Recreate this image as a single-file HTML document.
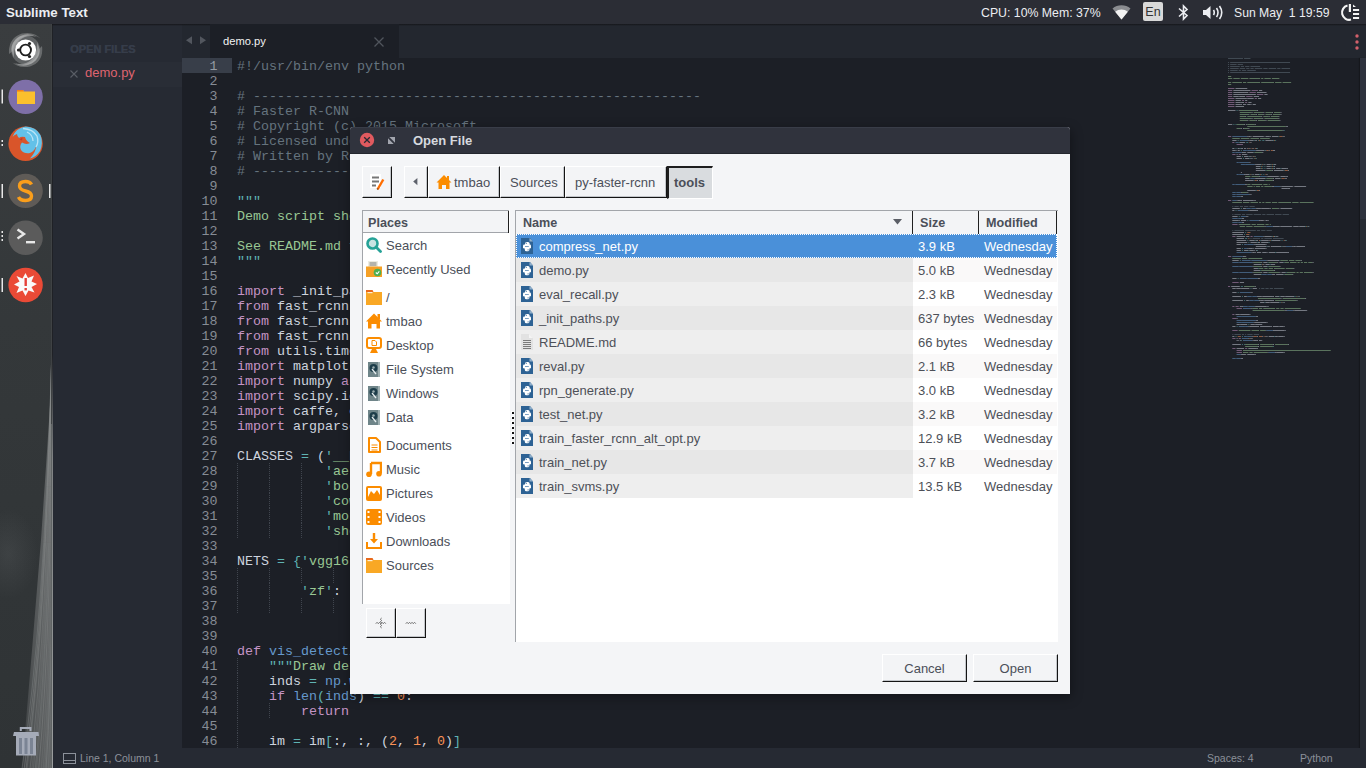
<!DOCTYPE html>
<html><head><meta charset="utf-8">
<style>
*{margin:0;padding:0;box-sizing:border-box}
html,body{width:1366px;height:768px;overflow:hidden;background:#1e2127;font-family:"Liberation Sans",sans-serif}
.abs{position:absolute}
#panel{position:absolute;left:0;top:0;width:1366px;height:24px;background:#2b2d35;color:#eceef2;font-size:12.5px}
#launcher{position:absolute;left:0;top:24px;width:52px;height:744px;background:linear-gradient(180deg,#3a3d3f 0%,#34383a 40%,#2f3335 100%)}
#sidebar{position:absolute;left:53px;top:24px;width:129px;height:724px;background:#262a33}
#tabbar{position:absolute;left:182px;top:24px;width:1184px;height:34px;background:#23272f}
#tab{position:absolute;left:210px;top:24px;width:189px;height:34px;background:#1c1f26}
#editor{position:absolute;left:182px;top:58px;width:1184px;height:690px;background:#1c1f26}
#status{position:absolute;left:53px;top:748px;width:1313px;height:20px;background:#262a33;color:#8c919a;font-size:10.5px}
.mono{font-family:"Liberation Mono",monospace;font-size:13.33px}
#code{position:absolute;left:237px;top:59px;color:#cdd3de;white-space:pre}
#gutter{position:absolute;left:182px;top:59px;width:35.5px;color:#868c95;text-align:right}
.ln,.gn{height:15px;line-height:15px}
.gn.cur{color:#959ba4}
.com{color:#65737e}.str{color:#99c794}.kw{color:#c594c5}.num{color:#f99157}.op{color:#5fb3b3}.fn{color:#6699cc}
.g{position:absolute;width:1px;height:15px;background-image:linear-gradient(#40454e 50%,transparent 50%);background-size:1px 2px}
#dialog{position:absolute;left:350px;top:127px;width:720px;height:567px;background:#f4f5f7;box-shadow:1px 3px 12px rgba(0,0,0,.38);border-radius:3px 3px 0 0}
#dtitle{position:absolute;left:0;top:0;width:720px;height:27px;background:#30333d;border-radius:3px 3px 0 0;border-top:1px solid #393d48;border-bottom:1px solid #24272e}
.ui{font-family:"Liberation Sans",sans-serif;color:#4c4c4c;font-size:13px}
.btn{position:absolute;background:#f3f4f6;border-right:1px solid #141414;border-bottom:1px solid #141414;border-left:1px solid #fff;border-top:1px solid #fff;box-shadow:inset -1px -1px 0 #c3c6ca}
.place{position:absolute;left:4px;height:24px;line-height:24px;font-size:13px;color:#4c4c4c}
.place svg{position:absolute;left:0;top:4px}
.place span{position:absolute;left:20px;top:0;white-space:nowrap}
.row{position:absolute;left:0;width:541px;height:24px;font-size:13px;color:#4c4c4c;line-height:24px}
.row .c1{position:absolute;left:0;width:397px;height:24px}
.row .c2{position:absolute;left:397px;width:66px;height:24px}
.row .c3{position:absolute;left:463px;width:78px;height:24px}
.row .t{position:absolute;white-space:nowrap}
.dtxt{color:#4b4f59;font-size:13px;white-space:nowrap;margin-top:1px}
.ptxt{color:#4b4f59;font-size:13px;white-space:nowrap;margin-top:1px}
</style></head><body>

<div id="panel">
  <div class="abs" style="left:6px;top:5px;font-weight:bold;font-size:13.3px;">Sublime Text</div>
  <div class="abs" style="left:981px;top:6px;font-size:12.3px;">CPU: 10% Mem: 37%</div>
  <svg class="abs" style="left:1112px;top:4px" width="19" height="16" viewBox="0 0 19 16"><path d="M9.5 15.5 L0.5 4.5 A14 14 0 0 1 18.5 4.5 Z" fill="#8a8c90"/><path d="M9.5 15.5 L3.2 7.8 A9.5 9.5 0 0 1 15.8 7.8 Z" fill="#f2f2f2"/></svg>
  <div class="abs" style="left:1143px;top:2px;width:20px;height:19px;background:#d9d9d9;border-radius:2px;color:#333;font-size:12.5px;text-align:center;line-height:20px">En</div>
  <svg class="abs" style="left:1177px;top:4px" width="13" height="17" viewBox="0 0 13 17"><path d="M2 4.5 L10 11.5 L6.5 15 L6.5 2 L10 5.5 L2 12.5" fill="none" stroke="#eceef2" stroke-width="1.6"/></svg>
  <svg class="abs" style="left:1202px;top:5px" width="22" height="15" viewBox="0 0 22 15"><path d="M1 5 H4 L8.5 1 V14 L4 10 H1 Z" fill="#eceef2"/><path d="M11.5 5 Q13 7.5 11.5 10 M14.5 3 Q17.5 7.5 14.5 12 M17.5 1 Q22 7.5 17.5 14" fill="none" stroke="#eceef2" stroke-width="1.6"/></svg>
  <div class="abs" style="left:1234px;top:6px;font-size:12.2px;">Sun May&nbsp; 1 19:59</div>
  <svg class="abs" style="left:1340px;top:3px" width="26" height="19" viewBox="1340 3 26 19"><path d="M1347.5 5.6 A7.2 7.2 0 0 0 1351 19.6" fill="none" stroke="#f4f4f4" stroke-width="2.1"/><rect x="1348.8" y="4" width="2.2" height="8" fill="#f4f4f4"/><path d="M1353 4.6 L1356 7 H1353 Z" fill="#f4f4f4"/><rect x="1353" y="9" width="6.1" height="2" fill="#f4f4f4"/><rect x="1353" y="13" width="6.1" height="2" fill="#f4f4f4"/><rect x="1353" y="17" width="6.1" height="2" fill="#f4f4f4"/></svg>
</div>

<div id="launcher">
  <svg class="abs" style="left:0;top:0" width="53" height="744" viewBox="0 0 53 744">
    <defs>
      <linearGradient id="streak" x1="0" y1="0" x2="1" y2="0">
        <stop offset="0" stop-color="#55585a" stop-opacity=".35"/>
        <stop offset="0.35" stop-color="#5c5f60" stop-opacity=".75"/>
        <stop offset="1" stop-color="#6a6d6e" stop-opacity=".9"/>
      </linearGradient>
      <linearGradient id="edgefade" x1="0" y1="330" x2="0" y2="744" gradientUnits="userSpaceOnUse"><stop offset="0" stop-color="#a9acac" stop-opacity="0"/><stop offset=".25" stop-color="#a9acac" stop-opacity=".7"/><stop offset="1" stop-color="#b0b3b3" stop-opacity=".85"/></linearGradient>
      <radialGradient id="haze" cx=".5" cy=".5" r=".5"><stop offset="0" stop-color="#6a6e70" stop-opacity=".22"/><stop offset="1" stop-color="#6a6e70" stop-opacity="0"/></radialGradient>
      <radialGradient id="swirl" cx=".5" cy=".5" r=".5">
        <stop offset="0.5" stop-color="#fff" stop-opacity=".55"/>
        <stop offset="1" stop-color="#fff" stop-opacity="0"/>
      </radialGradient>
    </defs>
    <ellipse cx="8" cy="530" rx="30" ry="45" fill="url(#haze)"/><path d="M52 350 L52 744 L22 744 L32 626 L41 516 L47.5 420 Z" fill="url(#streak)"/><path d="M51.5 340 Q43.8 600 22.1 744" stroke="#8d9090" stroke-opacity="0.46" stroke-width="0.8" fill="none"/><path d="M51.5 340 Q44.9 600 24.3 744" stroke="#8d9090" stroke-opacity="0.53" stroke-width="0.8" fill="none"/><path d="M51.5 340 Q45.8 600 26.1 744" stroke="#8d9090" stroke-opacity="0.52" stroke-width="0.8" fill="none"/><path d="M51.5 340 Q46.3 600 27.1 744" stroke="#8d9090" stroke-opacity="0.36" stroke-width="0.8" fill="none"/><path d="M51.5 340 Q47.8 600 30.1 744" stroke="#8d9090" stroke-opacity="0.43" stroke-width="0.8" fill="none"/><path d="M51.5 340 Q48.7 600 32.0 744" stroke="#8d9090" stroke-opacity="0.24" stroke-width="0.8" fill="none"/><path d="M51.5 340 Q49.4 600 33.4 744" stroke="#8d9090" stroke-opacity="0.29" stroke-width="0.8" fill="none"/><path d="M51.5 340 Q50.4 600 35.4 744" stroke="#8d9090" stroke-opacity="0.40" stroke-width="0.8" fill="none"/><path d="M51.5 340 Q51.1 600 36.6 744" stroke="#8d9090" stroke-opacity="0.28" stroke-width="0.8" fill="none"/><path d="M51.5 340 Q52.2 600 38.8 744" stroke="#8d9090" stroke-opacity="0.52" stroke-width="0.8" fill="none"/><path d="M51.5 340 Q53.4 600 41.3 744" stroke="#8d9090" stroke-opacity="0.26" stroke-width="0.8" fill="none"/><path d="M51.5 340 Q54.4 600 43.3 744" stroke="#8d9090" stroke-opacity="0.25" stroke-width="0.8" fill="none"/><path d="M51.5 340 Q55.2 600 44.9 744" stroke="#8d9090" stroke-opacity="0.24" stroke-width="0.8" fill="none"/><path d="M51.5 340 Q55.8 600 46.1 744" stroke="#8d9090" stroke-opacity="0.50" stroke-width="0.8" fill="none"/><path d="M51.5 340 Q56.9 600 48.3 744" stroke="#8d9090" stroke-opacity="0.28" stroke-width="0.8" fill="none"/><path d="M51.5 340 Q58.3 600 51.1 744" stroke="#8d9090" stroke-opacity="0.51" stroke-width="0.8" fill="none"/><rect x="51" y="0" width="1" height="744" fill="#3f4244"/><rect x="52" y="0" width="1" height="744" fill="#1f2126"/><path d="M52.5 330 L52.5 744" stroke="url(#edgefade)" stroke-width="1"/><path d="M51.5 400 L51.5 744" stroke="#8a8d8d" stroke-opacity=".45" stroke-width="1"/>
    <!-- ubuntu button -->
    <g opacity=".9"><path d="M9 30 Q8 14 22 9.5 Q34 7 41 15 Q36 10 28 11.5 Q15 14 13 27 Z" fill="#9a9c9d" opacity=".55"/><path d="M42 22 Q44 38 30 42.5 Q18 45 11 37 Q16 42 24 40.5 Q37 38 39 25 Z" fill="#9a9c9d" opacity=".55"/><circle cx="25.6" cy="26" r="14.5" fill="#b8baba" opacity=".35"/><path d="M14 34 Q8 22 17 14 Q27 7 37 13 Q27 10 20 16 Q13 23 14 34 Z" fill="#e0e0e0" opacity=".45"/><path d="M37 18 Q43 30 34 38 Q24 45 14 39 Q24 42 31 36 Q38 29 37 18 Z" fill="#e0e0e0" opacity=".45"/></g>
    <circle cx="25.6" cy="26" r="10.5" fill="#fff"/>
    <circle cx="25.6" cy="26" r="5.4" fill="none" stroke="#1e1e1e" stroke-width="1.9"/>
    <circle cx="29.5" cy="19.5" r="1.6" fill="#222"/><circle cx="18.5" cy="26" r="1.6" fill="#222"/><circle cx="29.5" cy="32.5" r="1.6" fill="#222"/>
    <!-- files -->
    <circle cx="25.6" cy="72.9" r="17.2" fill="#7e6fa8"/>
    <path d="M17 66 H23 L24 67.5 H35 V80 H17 Z" fill="#fbc02d"/><path d="M17 66 H23 L24 67.5 H17 Z" fill="#f57f17"/>
    <rect x="1.5" y="65.5" width="1.5" height="14" fill="#e8e8e8"/>
    <!-- firefox -->
    <circle cx="25.6" cy="119.75" r="17.2" fill="#d9552a"/>
    <path d="M12.5 113 Q16 104 25.6 102.6 Q36 103 40.5 111 Q43.5 119 40 127 Q36 133 30 134.5 Q36 128 36.5 121 Q35 127 30 129 Q24 130 21 126 Q19 122 22 118.5 Q26 121 30 119 Q26 117 25 113 Q21 112 19 114 Q17 112 17 110 Q14 111 12.5 113 Z" fill="#63c1e8"/>
    <path d="M23 104.5 Q33 105 37 112 Q39 118 36 123 M27 108 Q33 111 33 117" fill="none" stroke="#b9e4f6" stroke-width="1.3"/>
    <path d="M19.5 115.5 L22.5 113.5 L22 116.5 Z" fill="#c0392b"/>
    <rect x="1.5" y="116" width="1.5" height="2" fill="#e8e8e8"/><rect x="1.5" y="120" width="1.5" height="2" fill="#e8e8e8"/>
    <!-- sublime -->
    <circle cx="25.6" cy="166.9" r="17.2" fill="#5f5b57"/>
    <path d="M31.5 160.5 Q30 157.5 25.5 157.5 Q19.5 157.5 19.5 162 Q19.5 165.5 25.5 167 Q31.5 168.5 31.5 172 Q31.5 176.5 25.5 176.5 Q20 176.5 18.5 173" fill="none" stroke="#fa9e1b" stroke-width="3.4"/>
    <rect x="1.5" y="160" width="1.5" height="14" fill="#e8e8e8"/><rect x="49" y="160" width="1.5" height="14" fill="#e8e8e8"/>
    <!-- terminal -->
    <circle cx="25.6" cy="213.75" r="17.2" fill="#5b5b5b"/>
    <path d="M17.5 205.5 L24 210 L17.5 214.5" fill="none" stroke="#e8e8e8" stroke-width="2.4"/>
    <rect x="26" y="217" width="9" height="2.4" fill="#e8e8e8"/>
    <rect x="1.5" y="207" width="1.5" height="2" fill="#e8e8e8"/><rect x="1.5" y="211" width="1.5" height="2" fill="#e8e8e8"/><rect x="1.5" y="215" width="1.5" height="2" fill="#e8e8e8"/>
    <!-- red -->
    <circle cx="25.6" cy="261" r="17.2" fill="#ea4a36"/>
    <path d="M25.5 249 L28 254 L34 251.5 L31.5 257.5 L37 260 L31.5 263 L34.5 268.5 L28.5 266.5 L25.5 272 L22.5 266.5 L16.5 269 L19 263 L14 260.5 L19.5 257.5 L16.5 252 L22.5 254.5 Z" fill="#fafafa"/>
    <rect x="24.5" y="254" width="2.4" height="8" fill="#e5413a"/><rect x="24.5" y="264" width="2.4" height="2.4" fill="#e5413a"/>
    <rect x="1.5" y="254" width="1.5" height="14" fill="#e8e8e8"/>
    <!-- trash -->
    <path d="M20.8 707 V704 H30.5 V707" fill="none" stroke="#a5abb8" stroke-width="2"/>
    <path d="M14 708 H38.5 L39 712 H13 Z" fill="#a5abb8"/>
    <rect x="16" y="712" width="20" height="19.5" fill="#a5abb8"/>
    <rect x="19" y="714" width="3" height="16" fill="#7b8494"/><rect x="24.5" y="714" width="3" height="16" fill="#7b8494"/><rect x="30" y="714" width="3" height="16" fill="#7b8494"/>
  </svg>
</div>

<div id="sidebar">
  <div class="abs" style="left:17px;top:19px;font-size:11px;font-weight:bold;color:#363d4a;letter-spacing:0px;text-shadow:0.4px 0 0 #363d4a">OPEN FILES</div>
  <div class="abs" style="left:0;top:38px;width:129px;height:25px;background:#292d36"></div>
  <svg class="abs" style="left:17px;top:46px" width="8" height="8"><path d="M0.5 0.5 L7.5 7.5 M7.5 0.5 L0.5 7.5" stroke="#5a5e66" stroke-width="1.1"/></svg>
  <div class="abs" style="left:32px;top:41px;font-size:13px;color:#de6470">demo.py</div>
</div>
<div id="tabbar"></div><div class="abs" style="left:52px;top:24px;width:1314px;height:2px;background:linear-gradient(#15161a,rgba(21,22,26,0))"></div><svg class="abs" style="left:1354px;top:33px" width="6" height="17"><circle cx="3" cy="3" r="1.7" fill="#d3606b"/><circle cx="3" cy="9" r="1.7" fill="#d3606b"/><circle cx="3" cy="15" r="1.7" fill="#d3606b"/></svg>
<div id="tab"></div>
<div class="abs" style="left:223px;top:35px;font-size:11.2px;color:#f2f2f2">demo.py</div>
<svg class="abs" style="left:374px;top:37px" width="10" height="10"><path d="M0.5 0.5 L9.5 9.5 M9.5 0.5 L0.5 9.5" stroke="#50555d" stroke-width="1.3"/></svg>
<svg class="abs" style="left:186px;top:36px" width="21" height="9"><path d="M0 4.2 L6 0.2 V8.2 Z M20 4.2 L14 0.2 V8.2 Z" fill="#52565e"/></svg>
<div id="editor"></div>
<div class="abs" style="left:182px;top:58px;width:50px;height:15px;background:#383e49"></div>
<div id="gutter" class="mono"><div class="gn cur">1</div><div class="gn">2</div><div class="gn">3</div><div class="gn">4</div><div class="gn">5</div><div class="gn">6</div><div class="gn">7</div><div class="gn">8</div><div class="gn">9</div><div class="gn">10</div><div class="gn">11</div><div class="gn">12</div><div class="gn">13</div><div class="gn">14</div><div class="gn">15</div><div class="gn">16</div><div class="gn">17</div><div class="gn">18</div><div class="gn">19</div><div class="gn">20</div><div class="gn">21</div><div class="gn">22</div><div class="gn">23</div><div class="gn">24</div><div class="gn">25</div><div class="gn">26</div><div class="gn">27</div><div class="gn">28</div><div class="gn">29</div><div class="gn">30</div><div class="gn">31</div><div class="gn">32</div><div class="gn">33</div><div class="gn">34</div><div class="gn">35</div><div class="gn">36</div><div class="gn">37</div><div class="gn">38</div><div class="gn">39</div><div class="gn">40</div><div class="gn">41</div><div class="gn">42</div><div class="gn">43</div><div class="gn">44</div><div class="gn">45</div><div class="gn">46</div><div class="gn">47</div></div>
<div class="g" style="left:237px;top:463px"></div><div class="g" style="left:269px;top:463px"></div><div class="g" style="left:301px;top:463px"></div><div class="g" style="left:237px;top:478px"></div><div class="g" style="left:269px;top:478px"></div><div class="g" style="left:301px;top:478px"></div><div class="g" style="left:237px;top:493px"></div><div class="g" style="left:269px;top:493px"></div><div class="g" style="left:301px;top:493px"></div><div class="g" style="left:237px;top:508px"></div><div class="g" style="left:269px;top:508px"></div><div class="g" style="left:301px;top:508px"></div><div class="g" style="left:237px;top:523px"></div><div class="g" style="left:269px;top:523px"></div><div class="g" style="left:301px;top:523px"></div><div class="g" style="left:237px;top:568px"></div><div class="g" style="left:269px;top:568px"></div><div class="g" style="left:301px;top:568px"></div><div class="g" style="left:333px;top:568px"></div><div class="g" style="left:365px;top:568px"></div><div class="g" style="left:237px;top:583px"></div><div class="g" style="left:269px;top:583px"></div><div class="g" style="left:237px;top:598px"></div><div class="g" style="left:269px;top:598px"></div><div class="g" style="left:301px;top:598px"></div><div class="g" style="left:333px;top:598px"></div><div class="g" style="left:365px;top:598px"></div><div class="g" style="left:237px;top:658px"></div><div class="g" style="left:237px;top:673px"></div><div class="g" style="left:237px;top:688px"></div><div class="g" style="left:237px;top:703px"></div><div class="g" style="left:269px;top:703px"></div><div class="g" style="left:237px;top:718px"></div><div class="g" style="left:237px;top:733px"></div><div class="g" style="left:237px;top:748px"></div>
<div id="code" class="mono"><div class="ln"><span class="com">#!/usr/bin/env python</span></div><div class="ln">&nbsp;</div><div class="ln"><span class="com"># --------------------------------------------------------</span></div><div class="ln"><span class="com"># Faster R-CNN</span></div><div class="ln"><span class="com"># Copyright (c) 2015 Microsoft</span></div><div class="ln"><span class="com"># Licensed under The MIT License [see LICENSE for details]</span></div><div class="ln"><span class="com"># Written by Ross Girshick</span></div><div class="ln"><span class="com"># --------------------------------------------------------</span></div><div class="ln">&nbsp;</div><div class="ln"><span class="op">&quot;&quot;&quot;</span><span class="str"></span></div><div class="ln"><span class="str">Demo script showing detections in sample images.</span></div><div class="ln"><span class="str"></span></div><div class="ln"><span class="str">See README.md for installation instructions before running.</span></div><div class="ln"><span class="op">&quot;&quot;&quot;</span><span class="str"></span></div><div class="ln">&nbsp;</div><div class="ln"><span class="kw">import</span> _init_paths</div><div class="ln"><span class="kw">from</span> fast_rcnn.config <span class="kw">import</span> cfg</div><div class="ln"><span class="kw">from</span> fast_rcnn.test <span class="kw">import</span> im_detect</div><div class="ln"><span class="kw">from</span> fast_rcnn.nms_wrapper <span class="kw">import</span> nms</div><div class="ln"><span class="kw">from</span> utils.timer <span class="kw">import</span> Timer</div><div class="ln"><span class="kw">import</span> matplotlib.pyplot <span class="kw">as</span> plt</div><div class="ln"><span class="kw">import</span> numpy <span class="kw">as</span> np</div><div class="ln"><span class="kw">import</span> scipy.io <span class="kw">as</span> sio</div><div class="ln"><span class="kw">import</span> caffe, os, sys, cv2</div><div class="ln"><span class="kw">import</span> argparse</div><div class="ln">&nbsp;</div><div class="ln">CLASSES <span class="op">=</span> (<span class="op">&#x27;</span><span class="str">__background__</span><span class="op">&#x27;</span>,</div><div class="ln">           <span class="op">&#x27;</span><span class="str">aeroplane</span><span class="op">&#x27;</span>, <span class="op">&#x27;</span><span class="str">bicycle</span><span class="op">&#x27;</span>, <span class="op">&#x27;</span><span class="str">bird</span><span class="op">&#x27;</span>, <span class="op">&#x27;</span><span class="str">boat</span><span class="op">&#x27;</span>,</div><div class="ln">           <span class="op">&#x27;</span><span class="str">bottle</span><span class="op">&#x27;</span>, <span class="op">&#x27;</span><span class="str">bus</span><span class="op">&#x27;</span>, <span class="op">&#x27;</span><span class="str">car</span><span class="op">&#x27;</span>, <span class="op">&#x27;</span><span class="str">cat</span><span class="op">&#x27;</span>, <span class="op">&#x27;</span><span class="str">chair</span><span class="op">&#x27;</span>,</div><div class="ln">           <span class="op">&#x27;</span><span class="str">cow</span><span class="op">&#x27;</span>, <span class="op">&#x27;</span><span class="str">diningtable</span><span class="op">&#x27;</span>, <span class="op">&#x27;</span><span class="str">dog</span><span class="op">&#x27;</span>, <span class="op">&#x27;</span><span class="str">horse</span><span class="op">&#x27;</span>,</div><div class="ln">           <span class="op">&#x27;</span><span class="str">motorbike</span><span class="op">&#x27;</span>, <span class="op">&#x27;</span><span class="str">person</span><span class="op">&#x27;</span>, <span class="op">&#x27;</span><span class="str">pottedplant</span><span class="op">&#x27;</span>,</div><div class="ln">           <span class="op">&#x27;</span><span class="str">sheep</span><span class="op">&#x27;</span>, <span class="op">&#x27;</span><span class="str">sofa</span><span class="op">&#x27;</span>, <span class="op">&#x27;</span><span class="str">train</span><span class="op">&#x27;</span>, <span class="op">&#x27;</span><span class="str">tvmonitor</span><span class="op">&#x27;</span>)</div><div class="ln">&nbsp;</div><div class="ln">NETS <span class="op">=</span> <span class="op">{</span><span class="op">&#x27;</span><span class="str">vgg16</span><span class="op">&#x27;</span>: (<span class="op">&#x27;</span><span class="str">VGG16</span><span class="op">&#x27;</span>,</div><div class="ln">                  <span class="op">&#x27;</span><span class="str">VGG16_faster_rcnn_final.caffemodel</span><span class="op">&#x27;</span>),</div><div class="ln">        <span class="op">&#x27;</span><span class="str">zf</span><span class="op">&#x27;</span>: (<span class="op">&#x27;</span><span class="str">ZF</span><span class="op">&#x27;</span>,</div><div class="ln">                  <span class="op">&#x27;</span><span class="str">ZF_faster_rcnn_final.caffemodel</span><span class="op">&#x27;</span>)<span class="op">}</span></div><div class="ln">&nbsp;</div><div class="ln">&nbsp;</div><div class="ln"><span class="kw">def</span> <span class="fn">vis_detections</span>(im, class_name, dets, thresh<span class="op">=</span><span class="num">0.5</span>):</div><div class="ln">    <span class="op">&quot;&quot;&quot;</span><span class="str">Draw detected bounding boxes.&quot;&quot;&quot;</span></div><div class="ln">    inds <span class="op">=</span> <span class="fn">np</span><span class="fn">.</span><span class="fn">where</span>(dets<span class="op">[</span>:, <span class="op">-</span><span class="num">1</span><span class="op">]</span> <span class="op">&gt;=</span> thresh)<span class="op">[</span><span class="num">0</span><span class="op">]</span></div><div class="ln">    <span class="kw">if</span> <span class="fn">len</span><span class="op">(</span><span class="fn">inds</span>) <span class="op">==</span> <span class="num">0</span>:</div><div class="ln">        <span class="kw">return</span></div><div class="ln">&nbsp;</div><div class="ln">    im <span class="op">=</span> im<span class="op">[</span>:, :, (<span class="num">2</span>, <span class="num">1</span>, <span class="num">0</span>)<span class="op">]</span></div><div class="ln">    fig, ax <span class="op">=</span> <span class="fn">plt</span><span class="fn">.</span><span class="fn">subplots</span>(figsize<span class="op">=</span>(<span class="num">12</span>, <span class="num">12</span>))</div></div>
<svg width="140" height="302" style="position:absolute;left:1228px;top:58px;opacity:.5"><rect x="0.00" y="0" width="14.98" height="1" fill="#65737e"/><rect x="16.05" y="0" width="6.42" height="1" fill="#65737e"/><rect x="0.00" y="4" width="1.07" height="1" fill="#65737e"/><rect x="2.14" y="4" width="59.92" height="1" fill="#65737e"/><rect x="0.00" y="6" width="1.07" height="1" fill="#65737e"/><rect x="2.14" y="6" width="6.42" height="1" fill="#65737e"/><rect x="9.63" y="6" width="5.35" height="1" fill="#65737e"/><rect x="0.00" y="8" width="1.07" height="1" fill="#65737e"/><rect x="2.14" y="8" width="9.63" height="1" fill="#65737e"/><rect x="12.84" y="8" width="3.21" height="1" fill="#65737e"/><rect x="17.12" y="8" width="4.28" height="1" fill="#65737e"/><rect x="22.47" y="8" width="9.63" height="1" fill="#65737e"/><rect x="0.00" y="10" width="1.07" height="1" fill="#65737e"/><rect x="2.14" y="10" width="8.56" height="1" fill="#65737e"/><rect x="11.77" y="10" width="5.35" height="1" fill="#65737e"/><rect x="18.19" y="10" width="3.21" height="1" fill="#65737e"/><rect x="22.47" y="10" width="3.21" height="1" fill="#65737e"/><rect x="26.75" y="10" width="7.49" height="1" fill="#65737e"/><rect x="35.31" y="10" width="4.28" height="1" fill="#65737e"/><rect x="40.66" y="10" width="7.49" height="1" fill="#65737e"/><rect x="49.22" y="10" width="3.21" height="1" fill="#65737e"/><rect x="53.50" y="10" width="8.56" height="1" fill="#65737e"/><rect x="0.00" y="12" width="1.07" height="1" fill="#65737e"/><rect x="2.14" y="12" width="7.49" height="1" fill="#65737e"/><rect x="10.70" y="12" width="2.14" height="1" fill="#65737e"/><rect x="13.91" y="12" width="4.28" height="1" fill="#65737e"/><rect x="19.26" y="12" width="8.56" height="1" fill="#65737e"/><rect x="0.00" y="14" width="1.07" height="1" fill="#65737e"/><rect x="2.14" y="14" width="59.92" height="1" fill="#65737e"/><rect x="0.00" y="18" width="3.21" height="1" fill="#99c794"/><rect x="0.00" y="20" width="4.28" height="1" fill="#99c794"/><rect x="5.35" y="20" width="6.42" height="1" fill="#99c794"/><rect x="12.84" y="20" width="7.49" height="1" fill="#99c794"/><rect x="21.40" y="20" width="10.70" height="1" fill="#99c794"/><rect x="33.17" y="20" width="2.14" height="1" fill="#99c794"/><rect x="36.38" y="20" width="6.42" height="1" fill="#99c794"/><rect x="43.87" y="20" width="7.49" height="1" fill="#99c794"/><rect x="0.00" y="24" width="3.21" height="1" fill="#99c794"/><rect x="4.28" y="24" width="9.63" height="1" fill="#99c794"/><rect x="14.98" y="24" width="3.21" height="1" fill="#99c794"/><rect x="19.26" y="24" width="12.84" height="1" fill="#99c794"/><rect x="33.17" y="24" width="12.84" height="1" fill="#99c794"/><rect x="47.08" y="24" width="6.42" height="1" fill="#99c794"/><rect x="54.57" y="24" width="8.56" height="1" fill="#99c794"/><rect x="0.00" y="26" width="3.21" height="1" fill="#99c794"/><rect x="0.00" y="30" width="6.42" height="1" fill="#c594c5"/><rect x="7.49" y="30" width="11.77" height="1" fill="#cdd3de"/><rect x="0.00" y="32" width="4.28" height="1" fill="#c594c5"/><rect x="5.35" y="32" width="9.63" height="1" fill="#cdd3de"/><rect x="14.98" y="32" width="1.07" height="1" fill="#cdd3de"/><rect x="16.05" y="32" width="6.42" height="1" fill="#cdd3de"/><rect x="23.54" y="32" width="6.42" height="1" fill="#c594c5"/><rect x="31.03" y="32" width="3.21" height="1" fill="#cdd3de"/><rect x="0.00" y="34" width="4.28" height="1" fill="#c594c5"/><rect x="5.35" y="34" width="9.63" height="1" fill="#cdd3de"/><rect x="14.98" y="34" width="1.07" height="1" fill="#cdd3de"/><rect x="16.05" y="34" width="4.28" height="1" fill="#cdd3de"/><rect x="21.40" y="34" width="6.42" height="1" fill="#c594c5"/><rect x="28.89" y="34" width="9.63" height="1" fill="#cdd3de"/><rect x="0.00" y="36" width="4.28" height="1" fill="#c594c5"/><rect x="5.35" y="36" width="9.63" height="1" fill="#cdd3de"/><rect x="14.98" y="36" width="1.07" height="1" fill="#cdd3de"/><rect x="16.05" y="36" width="11.77" height="1" fill="#cdd3de"/><rect x="28.89" y="36" width="6.42" height="1" fill="#c594c5"/><rect x="36.38" y="36" width="3.21" height="1" fill="#cdd3de"/><rect x="0.00" y="38" width="4.28" height="1" fill="#c594c5"/><rect x="5.35" y="38" width="5.35" height="1" fill="#cdd3de"/><rect x="10.70" y="38" width="1.07" height="1" fill="#cdd3de"/><rect x="11.77" y="38" width="5.35" height="1" fill="#cdd3de"/><rect x="18.19" y="38" width="6.42" height="1" fill="#c594c5"/><rect x="25.68" y="38" width="5.35" height="1" fill="#cdd3de"/><rect x="0.00" y="40" width="6.42" height="1" fill="#c594c5"/><rect x="7.49" y="40" width="10.70" height="1" fill="#cdd3de"/><rect x="18.19" y="40" width="1.07" height="1" fill="#cdd3de"/><rect x="19.26" y="40" width="6.42" height="1" fill="#cdd3de"/><rect x="26.75" y="40" width="2.14" height="1" fill="#c594c5"/><rect x="29.96" y="40" width="3.21" height="1" fill="#cdd3de"/><rect x="0.00" y="42" width="6.42" height="1" fill="#c594c5"/><rect x="7.49" y="42" width="5.35" height="1" fill="#cdd3de"/><rect x="13.91" y="42" width="2.14" height="1" fill="#c594c5"/><rect x="17.12" y="42" width="2.14" height="1" fill="#cdd3de"/><rect x="0.00" y="44" width="6.42" height="1" fill="#c594c5"/><rect x="7.49" y="44" width="5.35" height="1" fill="#cdd3de"/><rect x="12.84" y="44" width="1.07" height="1" fill="#cdd3de"/><rect x="13.91" y="44" width="2.14" height="1" fill="#cdd3de"/><rect x="17.12" y="44" width="2.14" height="1" fill="#c594c5"/><rect x="20.33" y="44" width="3.21" height="1" fill="#cdd3de"/><rect x="0.00" y="46" width="6.42" height="1" fill="#c594c5"/><rect x="7.49" y="46" width="5.35" height="1" fill="#cdd3de"/><rect x="12.84" y="46" width="1.07" height="1" fill="#cdd3de"/><rect x="14.98" y="46" width="2.14" height="1" fill="#cdd3de"/><rect x="17.12" y="46" width="1.07" height="1" fill="#cdd3de"/><rect x="19.26" y="46" width="3.21" height="1" fill="#cdd3de"/><rect x="22.47" y="46" width="1.07" height="1" fill="#cdd3de"/><rect x="24.61" y="46" width="3.21" height="1" fill="#cdd3de"/><rect x="0.00" y="48" width="6.42" height="1" fill="#c594c5"/><rect x="7.49" y="48" width="8.56" height="1" fill="#cdd3de"/><rect x="0.00" y="52" width="7.49" height="1" fill="#cdd3de"/><rect x="8.56" y="52" width="1.07" height="1" fill="#5fb3b3"/><rect x="10.70" y="52" width="1.07" height="1" fill="#cdd3de"/><rect x="11.77" y="52" width="17.12" height="1" fill="#99c794"/><rect x="28.89" y="52" width="1.07" height="1" fill="#cdd3de"/><rect x="11.77" y="54" width="11.77" height="1" fill="#99c794"/><rect x="23.54" y="54" width="1.07" height="1" fill="#cdd3de"/><rect x="25.68" y="54" width="9.63" height="1" fill="#99c794"/><rect x="35.31" y="54" width="1.07" height="1" fill="#cdd3de"/><rect x="37.45" y="54" width="6.42" height="1" fill="#99c794"/><rect x="43.87" y="54" width="1.07" height="1" fill="#cdd3de"/><rect x="46.01" y="54" width="6.42" height="1" fill="#99c794"/><rect x="52.43" y="54" width="1.07" height="1" fill="#cdd3de"/><rect x="11.77" y="56" width="8.56" height="1" fill="#99c794"/><rect x="20.33" y="56" width="1.07" height="1" fill="#cdd3de"/><rect x="22.47" y="56" width="5.35" height="1" fill="#99c794"/><rect x="27.82" y="56" width="1.07" height="1" fill="#cdd3de"/><rect x="29.96" y="56" width="5.35" height="1" fill="#99c794"/><rect x="35.31" y="56" width="1.07" height="1" fill="#cdd3de"/><rect x="37.45" y="56" width="5.35" height="1" fill="#99c794"/><rect x="42.80" y="56" width="1.07" height="1" fill="#cdd3de"/><rect x="44.94" y="56" width="7.49" height="1" fill="#99c794"/><rect x="52.43" y="56" width="1.07" height="1" fill="#cdd3de"/><rect x="11.77" y="58" width="5.35" height="1" fill="#99c794"/><rect x="17.12" y="58" width="1.07" height="1" fill="#cdd3de"/><rect x="19.26" y="58" width="13.91" height="1" fill="#99c794"/><rect x="33.17" y="58" width="1.07" height="1" fill="#cdd3de"/><rect x="35.31" y="58" width="5.35" height="1" fill="#99c794"/><rect x="40.66" y="58" width="1.07" height="1" fill="#cdd3de"/><rect x="42.80" y="58" width="7.49" height="1" fill="#99c794"/><rect x="50.29" y="58" width="1.07" height="1" fill="#cdd3de"/><rect x="11.77" y="60" width="11.77" height="1" fill="#99c794"/><rect x="23.54" y="60" width="1.07" height="1" fill="#cdd3de"/><rect x="25.68" y="60" width="8.56" height="1" fill="#99c794"/><rect x="34.24" y="60" width="1.07" height="1" fill="#cdd3de"/><rect x="36.38" y="60" width="13.91" height="1" fill="#99c794"/><rect x="50.29" y="60" width="1.07" height="1" fill="#cdd3de"/><rect x="11.77" y="62" width="7.49" height="1" fill="#99c794"/><rect x="19.26" y="62" width="1.07" height="1" fill="#cdd3de"/><rect x="21.40" y="62" width="6.42" height="1" fill="#99c794"/><rect x="27.82" y="62" width="1.07" height="1" fill="#cdd3de"/><rect x="29.96" y="62" width="7.49" height="1" fill="#99c794"/><rect x="37.45" y="62" width="1.07" height="1" fill="#cdd3de"/><rect x="39.59" y="62" width="11.77" height="1" fill="#99c794"/><rect x="51.36" y="62" width="1.07" height="1" fill="#cdd3de"/><rect x="0.00" y="66" width="4.28" height="1" fill="#cdd3de"/><rect x="5.35" y="66" width="1.07" height="1" fill="#5fb3b3"/><rect x="7.49" y="66" width="1.07" height="1" fill="#5fb3b3"/><rect x="8.56" y="66" width="7.49" height="1" fill="#99c794"/><rect x="16.05" y="66" width="1.07" height="1" fill="#cdd3de"/><rect x="18.19" y="66" width="1.07" height="1" fill="#cdd3de"/><rect x="19.26" y="66" width="7.49" height="1" fill="#99c794"/><rect x="26.75" y="66" width="1.07" height="1" fill="#cdd3de"/><rect x="19.26" y="68" width="38.52" height="1" fill="#99c794"/><rect x="57.78" y="68" width="1.07" height="1" fill="#cdd3de"/><rect x="58.85" y="68" width="1.07" height="1" fill="#cdd3de"/><rect x="8.56" y="70" width="4.28" height="1" fill="#99c794"/><rect x="12.84" y="70" width="1.07" height="1" fill="#cdd3de"/><rect x="14.98" y="70" width="1.07" height="1" fill="#cdd3de"/><rect x="16.05" y="70" width="4.28" height="1" fill="#99c794"/><rect x="20.33" y="70" width="1.07" height="1" fill="#cdd3de"/><rect x="19.26" y="72" width="35.31" height="1" fill="#99c794"/><rect x="54.57" y="72" width="1.07" height="1" fill="#cdd3de"/><rect x="55.64" y="72" width="1.07" height="1" fill="#5fb3b3"/><rect x="0.00" y="78" width="3.21" height="1" fill="#c594c5"/><rect x="4.28" y="78" width="14.98" height="1" fill="#6699cc"/><rect x="19.26" y="78" width="1.07" height="1" fill="#cdd3de"/><rect x="20.33" y="78" width="2.14" height="1" fill="#cdd3de"/><rect x="22.47" y="78" width="1.07" height="1" fill="#cdd3de"/><rect x="24.61" y="78" width="10.70" height="1" fill="#cdd3de"/><rect x="35.31" y="78" width="1.07" height="1" fill="#cdd3de"/><rect x="37.45" y="78" width="4.28" height="1" fill="#cdd3de"/><rect x="41.73" y="78" width="1.07" height="1" fill="#cdd3de"/><rect x="43.87" y="78" width="6.42" height="1" fill="#cdd3de"/><rect x="50.29" y="78" width="1.07" height="1" fill="#5fb3b3"/><rect x="51.36" y="78" width="3.21" height="1" fill="#f99157"/><rect x="54.57" y="78" width="1.07" height="1" fill="#cdd3de"/><rect x="55.64" y="78" width="1.07" height="1" fill="#cdd3de"/><rect x="4.28" y="80" width="7.49" height="1" fill="#99c794"/><rect x="12.84" y="80" width="8.56" height="1" fill="#99c794"/><rect x="22.47" y="80" width="8.56" height="1" fill="#99c794"/><rect x="32.10" y="80" width="9.63" height="1" fill="#99c794"/><rect x="4.28" y="82" width="4.28" height="1" fill="#cdd3de"/><rect x="9.63" y="82" width="1.07" height="1" fill="#5fb3b3"/><rect x="11.77" y="82" width="2.14" height="1" fill="#6699cc"/><rect x="13.91" y="82" width="1.07" height="1" fill="#6699cc"/><rect x="14.98" y="82" width="5.35" height="1" fill="#6699cc"/><rect x="20.33" y="82" width="1.07" height="1" fill="#cdd3de"/><rect x="21.40" y="82" width="4.28" height="1" fill="#cdd3de"/><rect x="25.68" y="82" width="1.07" height="1" fill="#5fb3b3"/><rect x="26.75" y="82" width="1.07" height="1" fill="#cdd3de"/><rect x="27.82" y="82" width="1.07" height="1" fill="#cdd3de"/><rect x="29.96" y="82" width="1.07" height="1" fill="#5fb3b3"/><rect x="31.03" y="82" width="1.07" height="1" fill="#f99157"/><rect x="32.10" y="82" width="1.07" height="1" fill="#5fb3b3"/><rect x="34.24" y="82" width="2.14" height="1" fill="#5fb3b3"/><rect x="37.45" y="82" width="6.42" height="1" fill="#cdd3de"/><rect x="43.87" y="82" width="1.07" height="1" fill="#cdd3de"/><rect x="44.94" y="82" width="1.07" height="1" fill="#5fb3b3"/><rect x="46.01" y="82" width="1.07" height="1" fill="#f99157"/><rect x="47.08" y="82" width="1.07" height="1" fill="#5fb3b3"/><rect x="4.28" y="84" width="2.14" height="1" fill="#c594c5"/><rect x="7.49" y="84" width="3.21" height="1" fill="#6699cc"/><rect x="10.70" y="84" width="1.07" height="1" fill="#5fb3b3"/><rect x="11.77" y="84" width="4.28" height="1" fill="#cdd3de"/><rect x="16.05" y="84" width="1.07" height="1" fill="#cdd3de"/><rect x="18.19" y="84" width="2.14" height="1" fill="#5fb3b3"/><rect x="21.40" y="84" width="1.07" height="1" fill="#f99157"/><rect x="22.47" y="84" width="1.07" height="1" fill="#cdd3de"/><rect x="8.56" y="86" width="6.42" height="1" fill="#c594c5"/><rect x="4.28" y="90" width="2.14" height="1" fill="#cdd3de"/><rect x="7.49" y="90" width="1.07" height="1" fill="#5fb3b3"/><rect x="9.63" y="90" width="2.14" height="1" fill="#cdd3de"/><rect x="11.77" y="90" width="1.07" height="1" fill="#5fb3b3"/><rect x="12.84" y="90" width="1.07" height="1" fill="#cdd3de"/><rect x="13.91" y="90" width="1.07" height="1" fill="#cdd3de"/><rect x="16.05" y="90" width="1.07" height="1" fill="#cdd3de"/><rect x="17.12" y="90" width="1.07" height="1" fill="#cdd3de"/><rect x="19.26" y="90" width="1.07" height="1" fill="#cdd3de"/><rect x="20.33" y="90" width="1.07" height="1" fill="#f99157"/><rect x="21.40" y="90" width="1.07" height="1" fill="#cdd3de"/><rect x="23.54" y="90" width="1.07" height="1" fill="#f99157"/><rect x="24.61" y="90" width="1.07" height="1" fill="#cdd3de"/><rect x="26.75" y="90" width="1.07" height="1" fill="#f99157"/><rect x="27.82" y="90" width="1.07" height="1" fill="#cdd3de"/><rect x="28.89" y="90" width="1.07" height="1" fill="#5fb3b3"/><rect x="4.28" y="92" width="3.21" height="1" fill="#cdd3de"/><rect x="7.49" y="92" width="1.07" height="1" fill="#cdd3de"/><rect x="9.63" y="92" width="2.14" height="1" fill="#cdd3de"/><rect x="12.84" y="92" width="1.07" height="1" fill="#5fb3b3"/><rect x="14.98" y="92" width="3.21" height="1" fill="#6699cc"/><rect x="18.19" y="92" width="1.07" height="1" fill="#6699cc"/><rect x="19.26" y="92" width="8.56" height="1" fill="#6699cc"/><rect x="27.82" y="92" width="1.07" height="1" fill="#cdd3de"/><rect x="28.89" y="92" width="7.49" height="1" fill="#cdd3de"/><rect x="36.38" y="92" width="1.07" height="1" fill="#5fb3b3"/><rect x="37.45" y="92" width="1.07" height="1" fill="#cdd3de"/><rect x="38.52" y="92" width="2.14" height="1" fill="#f99157"/><rect x="40.66" y="92" width="1.07" height="1" fill="#cdd3de"/><rect x="42.80" y="92" width="2.14" height="1" fill="#f99157"/><rect x="44.94" y="92" width="1.07" height="1" fill="#cdd3de"/><rect x="46.01" y="92" width="1.07" height="1" fill="#cdd3de"/><rect x="4.28" y="94" width="2.14" height="1" fill="#6699cc"/><rect x="6.42" y="94" width="1.07" height="1" fill="#6699cc"/><rect x="7.49" y="94" width="6.42" height="1" fill="#6699cc"/><rect x="13.91" y="94" width="1.07" height="1" fill="#cdd3de"/><rect x="14.98" y="94" width="2.14" height="1" fill="#cdd3de"/><rect x="17.12" y="94" width="1.07" height="1" fill="#cdd3de"/><rect x="19.26" y="94" width="6.42" height="1" fill="#cdd3de"/><rect x="25.68" y="94" width="1.07" height="1" fill="#5fb3b3"/><rect x="26.75" y="94" width="7.49" height="1" fill="#99c794"/><rect x="34.24" y="94" width="1.07" height="1" fill="#cdd3de"/><rect x="4.28" y="96" width="3.21" height="1" fill="#c594c5"/><rect x="8.56" y="96" width="1.07" height="1" fill="#cdd3de"/><rect x="10.70" y="96" width="2.14" height="1" fill="#c594c5"/><rect x="13.91" y="96" width="4.28" height="1" fill="#cdd3de"/><rect x="18.19" y="96" width="1.07" height="1" fill="#cdd3de"/><rect x="8.56" y="98" width="4.28" height="1" fill="#cdd3de"/><rect x="13.91" y="98" width="1.07" height="1" fill="#5fb3b3"/><rect x="16.05" y="98" width="4.28" height="1" fill="#cdd3de"/><rect x="20.33" y="98" width="1.07" height="1" fill="#5fb3b3"/><rect x="21.40" y="98" width="1.07" height="1" fill="#cdd3de"/><rect x="22.47" y="98" width="1.07" height="1" fill="#cdd3de"/><rect x="24.61" y="98" width="1.07" height="1" fill="#cdd3de"/><rect x="25.68" y="98" width="1.07" height="1" fill="#f99157"/><rect x="26.75" y="98" width="1.07" height="1" fill="#5fb3b3"/><rect x="8.56" y="100" width="5.35" height="1" fill="#cdd3de"/><rect x="14.98" y="100" width="1.07" height="1" fill="#5fb3b3"/><rect x="17.12" y="100" width="4.28" height="1" fill="#cdd3de"/><rect x="21.40" y="100" width="1.07" height="1" fill="#5fb3b3"/><rect x="22.47" y="100" width="1.07" height="1" fill="#cdd3de"/><rect x="23.54" y="100" width="1.07" height="1" fill="#cdd3de"/><rect x="25.68" y="100" width="1.07" height="1" fill="#5fb3b3"/><rect x="26.75" y="100" width="1.07" height="1" fill="#f99157"/><rect x="27.82" y="100" width="1.07" height="1" fill="#5fb3b3"/><rect x="8.56" y="104" width="2.14" height="1" fill="#6699cc"/><rect x="10.70" y="104" width="1.07" height="1" fill="#6699cc"/><rect x="11.77" y="104" width="9.63" height="1" fill="#6699cc"/><rect x="21.40" y="104" width="1.07" height="1" fill="#cdd3de"/><rect x="12.84" y="106" width="3.21" height="1" fill="#6699cc"/><rect x="16.05" y="106" width="1.07" height="1" fill="#6699cc"/><rect x="17.12" y="106" width="9.63" height="1" fill="#6699cc"/><rect x="26.75" y="106" width="1.07" height="1" fill="#cdd3de"/><rect x="27.82" y="106" width="1.07" height="1" fill="#cdd3de"/><rect x="28.89" y="106" width="4.28" height="1" fill="#cdd3de"/><rect x="33.17" y="106" width="1.07" height="1" fill="#5fb3b3"/><rect x="34.24" y="106" width="1.07" height="1" fill="#f99157"/><rect x="35.31" y="106" width="1.07" height="1" fill="#5fb3b3"/><rect x="36.38" y="106" width="1.07" height="1" fill="#cdd3de"/><rect x="38.52" y="106" width="4.28" height="1" fill="#cdd3de"/><rect x="42.80" y="106" width="1.07" height="1" fill="#5fb3b3"/><rect x="43.87" y="106" width="1.07" height="1" fill="#f99157"/><rect x="44.94" y="106" width="1.07" height="1" fill="#5fb3b3"/><rect x="46.01" y="106" width="1.07" height="1" fill="#cdd3de"/><rect x="47.08" y="106" width="1.07" height="1" fill="#cdd3de"/><rect x="27.82" y="108" width="4.28" height="1" fill="#cdd3de"/><rect x="32.10" y="108" width="1.07" height="1" fill="#5fb3b3"/><rect x="33.17" y="108" width="1.07" height="1" fill="#f99157"/><rect x="34.24" y="108" width="1.07" height="1" fill="#5fb3b3"/><rect x="36.38" y="108" width="1.07" height="1" fill="#5fb3b3"/><rect x="38.52" y="108" width="4.28" height="1" fill="#cdd3de"/><rect x="42.80" y="108" width="1.07" height="1" fill="#5fb3b3"/><rect x="43.87" y="108" width="1.07" height="1" fill="#f99157"/><rect x="44.94" y="108" width="1.07" height="1" fill="#5fb3b3"/><rect x="46.01" y="108" width="1.07" height="1" fill="#cdd3de"/><rect x="27.82" y="110" width="4.28" height="1" fill="#cdd3de"/><rect x="32.10" y="110" width="1.07" height="1" fill="#5fb3b3"/><rect x="33.17" y="110" width="1.07" height="1" fill="#f99157"/><rect x="34.24" y="110" width="1.07" height="1" fill="#5fb3b3"/><rect x="36.38" y="110" width="1.07" height="1" fill="#5fb3b3"/><rect x="38.52" y="110" width="4.28" height="1" fill="#cdd3de"/><rect x="42.80" y="110" width="1.07" height="1" fill="#5fb3b3"/><rect x="43.87" y="110" width="1.07" height="1" fill="#f99157"/><rect x="44.94" y="110" width="1.07" height="1" fill="#5fb3b3"/><rect x="46.01" y="110" width="1.07" height="1" fill="#cdd3de"/><rect x="48.15" y="110" width="4.28" height="1" fill="#cdd3de"/><rect x="52.43" y="110" width="1.07" height="1" fill="#5fb3b3"/><rect x="53.50" y="110" width="5.35" height="1" fill="#cdd3de"/><rect x="58.85" y="110" width="1.07" height="1" fill="#cdd3de"/><rect x="27.82" y="112" width="9.63" height="1" fill="#cdd3de"/><rect x="37.45" y="112" width="1.07" height="1" fill="#5fb3b3"/><rect x="38.52" y="112" width="5.35" height="1" fill="#99c794"/><rect x="43.87" y="112" width="1.07" height="1" fill="#cdd3de"/><rect x="46.01" y="112" width="9.63" height="1" fill="#cdd3de"/><rect x="55.64" y="112" width="1.07" height="1" fill="#5fb3b3"/><rect x="56.71" y="112" width="3.21" height="1" fill="#f99157"/><rect x="59.92" y="112" width="1.07" height="1" fill="#cdd3de"/><rect x="12.84" y="114" width="1.07" height="1" fill="#cdd3de"/><rect x="8.56" y="116" width="2.14" height="1" fill="#6699cc"/><rect x="10.70" y="116" width="1.07" height="1" fill="#6699cc"/><rect x="11.77" y="116" width="4.28" height="1" fill="#6699cc"/><rect x="16.05" y="116" width="1.07" height="1" fill="#cdd3de"/><rect x="17.12" y="116" width="4.28" height="1" fill="#cdd3de"/><rect x="21.40" y="116" width="1.07" height="1" fill="#5fb3b3"/><rect x="22.47" y="116" width="1.07" height="1" fill="#f99157"/><rect x="23.54" y="116" width="1.07" height="1" fill="#5fb3b3"/><rect x="24.61" y="116" width="1.07" height="1" fill="#cdd3de"/><rect x="26.75" y="116" width="4.28" height="1" fill="#cdd3de"/><rect x="31.03" y="116" width="1.07" height="1" fill="#5fb3b3"/><rect x="32.10" y="116" width="1.07" height="1" fill="#f99157"/><rect x="33.17" y="116" width="1.07" height="1" fill="#5fb3b3"/><rect x="35.31" y="116" width="1.07" height="1" fill="#5fb3b3"/><rect x="37.45" y="116" width="1.07" height="1" fill="#f99157"/><rect x="38.52" y="116" width="1.07" height="1" fill="#cdd3de"/><rect x="17.12" y="118" width="5.35" height="1" fill="#99c794"/><rect x="23.54" y="118" width="7.49" height="1" fill="#99c794"/><rect x="31.03" y="118" width="1.07" height="1" fill="#cdd3de"/><rect x="32.10" y="118" width="6.42" height="1" fill="#6699cc"/><rect x="38.52" y="118" width="1.07" height="1" fill="#cdd3de"/><rect x="39.59" y="118" width="10.70" height="1" fill="#cdd3de"/><rect x="50.29" y="118" width="1.07" height="1" fill="#cdd3de"/><rect x="52.43" y="118" width="5.35" height="1" fill="#cdd3de"/><rect x="57.78" y="118" width="1.07" height="1" fill="#cdd3de"/><rect x="58.85" y="118" width="1.07" height="1" fill="#cdd3de"/><rect x="17.12" y="120" width="4.28" height="1" fill="#cdd3de"/><rect x="21.40" y="120" width="1.07" height="1" fill="#5fb3b3"/><rect x="22.47" y="120" width="4.28" height="1" fill="#6699cc"/><rect x="26.75" y="120" width="1.07" height="1" fill="#cdd3de"/><rect x="27.82" y="120" width="9.63" height="1" fill="#cdd3de"/><rect x="37.45" y="120" width="1.07" height="1" fill="#5fb3b3"/><rect x="38.52" y="120" width="6.42" height="1" fill="#99c794"/><rect x="44.94" y="120" width="1.07" height="1" fill="#cdd3de"/><rect x="47.08" y="120" width="5.35" height="1" fill="#cdd3de"/><rect x="52.43" y="120" width="1.07" height="1" fill="#5fb3b3"/><rect x="53.50" y="120" width="3.21" height="1" fill="#f99157"/><rect x="56.71" y="120" width="1.07" height="1" fill="#cdd3de"/><rect x="57.78" y="120" width="1.07" height="1" fill="#cdd3de"/><rect x="17.12" y="122" width="8.56" height="1" fill="#cdd3de"/><rect x="25.68" y="122" width="1.07" height="1" fill="#5fb3b3"/><rect x="26.75" y="122" width="2.14" height="1" fill="#f99157"/><rect x="28.89" y="122" width="1.07" height="1" fill="#cdd3de"/><rect x="31.03" y="122" width="5.35" height="1" fill="#cdd3de"/><rect x="36.38" y="122" width="1.07" height="1" fill="#5fb3b3"/><rect x="37.45" y="122" width="7.49" height="1" fill="#99c794"/><rect x="44.94" y="122" width="1.07" height="1" fill="#cdd3de"/><rect x="4.28" y="126" width="2.14" height="1" fill="#6699cc"/><rect x="6.42" y="126" width="1.07" height="1" fill="#6699cc"/><rect x="7.49" y="126" width="9.63" height="1" fill="#6699cc"/><rect x="17.12" y="126" width="1.07" height="1" fill="#cdd3de"/><rect x="18.19" y="126" width="1.07" height="1" fill="#cdd3de"/><rect x="19.26" y="126" width="3.21" height="1" fill="#99c794"/><rect x="23.54" y="126" width="10.70" height="1" fill="#99c794"/><rect x="35.31" y="126" width="4.28" height="1" fill="#99c794"/><rect x="40.66" y="126" width="1.07" height="1" fill="#99c794"/><rect x="19.26" y="128" width="5.35" height="1" fill="#99c794"/><rect x="25.68" y="128" width="1.07" height="1" fill="#99c794"/><rect x="27.82" y="128" width="4.28" height="1" fill="#99c794"/><rect x="33.17" y="128" width="2.14" height="1" fill="#99c794"/><rect x="36.38" y="128" width="7.49" height="1" fill="#99c794"/><rect x="43.87" y="128" width="1.07" height="1" fill="#cdd3de"/><rect x="44.94" y="128" width="1.07" height="1" fill="#cdd3de"/><rect x="46.01" y="128" width="6.42" height="1" fill="#6699cc"/><rect x="52.43" y="128" width="1.07" height="1" fill="#cdd3de"/><rect x="53.50" y="128" width="10.70" height="1" fill="#cdd3de"/><rect x="64.20" y="128" width="1.07" height="1" fill="#cdd3de"/><rect x="66.34" y="128" width="10.70" height="1" fill="#cdd3de"/><rect x="77.04" y="128" width="1.07" height="1" fill="#cdd3de"/><rect x="53.50" y="130" width="6.42" height="1" fill="#cdd3de"/><rect x="59.92" y="130" width="1.07" height="1" fill="#cdd3de"/><rect x="60.99" y="130" width="1.07" height="1" fill="#cdd3de"/><rect x="19.26" y="132" width="8.56" height="1" fill="#cdd3de"/><rect x="27.82" y="132" width="1.07" height="1" fill="#5fb3b3"/><rect x="28.89" y="132" width="2.14" height="1" fill="#f99157"/><rect x="31.03" y="132" width="1.07" height="1" fill="#cdd3de"/><rect x="4.28" y="134" width="3.21" height="1" fill="#6699cc"/><rect x="7.49" y="134" width="1.07" height="1" fill="#6699cc"/><rect x="8.56" y="134" width="4.28" height="1" fill="#6699cc"/><rect x="12.84" y="134" width="1.07" height="1" fill="#cdd3de"/><rect x="13.91" y="134" width="5.35" height="1" fill="#99c794"/><rect x="19.26" y="134" width="1.07" height="1" fill="#cdd3de"/><rect x="4.28" y="136" width="3.21" height="1" fill="#6699cc"/><rect x="7.49" y="136" width="1.07" height="1" fill="#6699cc"/><rect x="8.56" y="136" width="12.84" height="1" fill="#6699cc"/><rect x="21.40" y="136" width="1.07" height="1" fill="#cdd3de"/><rect x="22.47" y="136" width="1.07" height="1" fill="#cdd3de"/><rect x="4.28" y="138" width="3.21" height="1" fill="#6699cc"/><rect x="7.49" y="138" width="1.07" height="1" fill="#6699cc"/><rect x="8.56" y="138" width="4.28" height="1" fill="#6699cc"/><rect x="12.84" y="138" width="1.07" height="1" fill="#cdd3de"/><rect x="13.91" y="138" width="1.07" height="1" fill="#cdd3de"/><rect x="0.00" y="142" width="3.21" height="1" fill="#c594c5"/><rect x="4.28" y="142" width="4.28" height="1" fill="#6699cc"/><rect x="8.56" y="142" width="1.07" height="1" fill="#cdd3de"/><rect x="9.63" y="142" width="3.21" height="1" fill="#cdd3de"/><rect x="12.84" y="142" width="1.07" height="1" fill="#cdd3de"/><rect x="14.98" y="142" width="10.70" height="1" fill="#cdd3de"/><rect x="25.68" y="142" width="1.07" height="1" fill="#cdd3de"/><rect x="26.75" y="142" width="1.07" height="1" fill="#cdd3de"/><rect x="4.28" y="144" width="9.63" height="1" fill="#99c794"/><rect x="14.98" y="144" width="6.42" height="1" fill="#99c794"/><rect x="22.47" y="144" width="7.49" height="1" fill="#99c794"/><rect x="31.03" y="144" width="2.14" height="1" fill="#99c794"/><rect x="34.24" y="144" width="2.14" height="1" fill="#99c794"/><rect x="37.45" y="144" width="5.35" height="1" fill="#99c794"/><rect x="43.87" y="144" width="5.35" height="1" fill="#99c794"/><rect x="50.29" y="144" width="12.84" height="1" fill="#99c794"/><rect x="64.20" y="144" width="6.42" height="1" fill="#99c794"/><rect x="71.69" y="144" width="13.91" height="1" fill="#99c794"/><rect x="4.28" y="148" width="1.07" height="1" fill="#65737e"/><rect x="6.42" y="148" width="4.28" height="1" fill="#65737e"/><rect x="11.77" y="148" width="3.21" height="1" fill="#65737e"/><rect x="16.05" y="148" width="4.28" height="1" fill="#65737e"/><rect x="21.40" y="148" width="5.35" height="1" fill="#65737e"/><rect x="4.28" y="150" width="7.49" height="1" fill="#cdd3de"/><rect x="12.84" y="150" width="1.07" height="1" fill="#5fb3b3"/><rect x="14.98" y="150" width="2.14" height="1" fill="#cdd3de"/><rect x="17.12" y="150" width="1.07" height="1" fill="#cdd3de"/><rect x="18.19" y="150" width="4.28" height="1" fill="#6699cc"/><rect x="22.47" y="150" width="1.07" height="1" fill="#6699cc"/><rect x="23.54" y="150" width="4.28" height="1" fill="#6699cc"/><rect x="27.82" y="150" width="1.07" height="1" fill="#cdd3de"/><rect x="28.89" y="150" width="3.21" height="1" fill="#cdd3de"/><rect x="32.10" y="150" width="1.07" height="1" fill="#cdd3de"/><rect x="33.17" y="150" width="8.56" height="1" fill="#cdd3de"/><rect x="41.73" y="150" width="1.07" height="1" fill="#cdd3de"/><rect x="43.87" y="150" width="6.42" height="1" fill="#99c794"/><rect x="50.29" y="150" width="1.07" height="1" fill="#cdd3de"/><rect x="52.43" y="150" width="10.70" height="1" fill="#cdd3de"/><rect x="63.13" y="150" width="1.07" height="1" fill="#cdd3de"/><rect x="4.28" y="152" width="2.14" height="1" fill="#cdd3de"/><rect x="7.49" y="152" width="1.07" height="1" fill="#5fb3b3"/><rect x="9.63" y="152" width="3.21" height="1" fill="#6699cc"/><rect x="12.84" y="152" width="1.07" height="1" fill="#6699cc"/><rect x="13.91" y="152" width="6.42" height="1" fill="#6699cc"/><rect x="20.33" y="152" width="1.07" height="1" fill="#cdd3de"/><rect x="21.40" y="152" width="7.49" height="1" fill="#cdd3de"/><rect x="28.89" y="152" width="1.07" height="1" fill="#cdd3de"/><rect x="4.28" y="156" width="1.07" height="1" fill="#65737e"/><rect x="6.42" y="156" width="6.42" height="1" fill="#65737e"/><rect x="13.91" y="156" width="3.21" height="1" fill="#65737e"/><rect x="18.19" y="156" width="6.42" height="1" fill="#65737e"/><rect x="25.68" y="156" width="7.49" height="1" fill="#65737e"/><rect x="34.24" y="156" width="3.21" height="1" fill="#65737e"/><rect x="38.52" y="156" width="7.49" height="1" fill="#65737e"/><rect x="47.08" y="156" width="6.42" height="1" fill="#65737e"/><rect x="54.57" y="156" width="6.42" height="1" fill="#65737e"/><rect x="4.28" y="158" width="5.35" height="1" fill="#cdd3de"/><rect x="10.70" y="158" width="1.07" height="1" fill="#5fb3b3"/><rect x="12.84" y="158" width="5.35" height="1" fill="#6699cc"/><rect x="18.19" y="158" width="1.07" height="1" fill="#cdd3de"/><rect x="19.26" y="158" width="1.07" height="1" fill="#cdd3de"/><rect x="4.28" y="160" width="5.35" height="1" fill="#6699cc"/><rect x="9.63" y="160" width="1.07" height="1" fill="#6699cc"/><rect x="10.70" y="160" width="3.21" height="1" fill="#6699cc"/><rect x="13.91" y="160" width="1.07" height="1" fill="#cdd3de"/><rect x="14.98" y="160" width="1.07" height="1" fill="#cdd3de"/><rect x="4.28" y="162" width="6.42" height="1" fill="#cdd3de"/><rect x="10.70" y="162" width="1.07" height="1" fill="#cdd3de"/><rect x="12.84" y="162" width="5.35" height="1" fill="#cdd3de"/><rect x="19.26" y="162" width="1.07" height="1" fill="#5fb3b3"/><rect x="21.40" y="162" width="9.63" height="1" fill="#6699cc"/><rect x="31.03" y="162" width="1.07" height="1" fill="#cdd3de"/><rect x="32.10" y="162" width="3.21" height="1" fill="#cdd3de"/><rect x="35.31" y="162" width="1.07" height="1" fill="#cdd3de"/><rect x="37.45" y="162" width="2.14" height="1" fill="#cdd3de"/><rect x="39.59" y="162" width="1.07" height="1" fill="#cdd3de"/><rect x="4.28" y="164" width="5.35" height="1" fill="#6699cc"/><rect x="9.63" y="164" width="1.07" height="1" fill="#6699cc"/><rect x="10.70" y="164" width="3.21" height="1" fill="#6699cc"/><rect x="13.91" y="164" width="1.07" height="1" fill="#cdd3de"/><rect x="14.98" y="164" width="1.07" height="1" fill="#cdd3de"/><rect x="4.28" y="166" width="5.35" height="1" fill="#c594c5"/><rect x="10.70" y="166" width="1.07" height="1" fill="#cdd3de"/><rect x="11.77" y="166" width="10.70" height="1" fill="#99c794"/><rect x="23.54" y="166" width="4.28" height="1" fill="#99c794"/><rect x="28.89" y="166" width="7.49" height="1" fill="#99c794"/><rect x="37.45" y="166" width="3.21" height="1" fill="#99c794"/><rect x="41.73" y="166" width="1.07" height="1" fill="#99c794"/><rect x="11.77" y="168" width="5.35" height="1" fill="#99c794"/><rect x="18.19" y="168" width="6.42" height="1" fill="#99c794"/><rect x="25.68" y="168" width="10.70" height="1" fill="#99c794"/><rect x="36.38" y="168" width="1.07" height="1" fill="#cdd3de"/><rect x="37.45" y="168" width="1.07" height="1" fill="#cdd3de"/><rect x="38.52" y="168" width="6.42" height="1" fill="#6699cc"/><rect x="44.94" y="168" width="1.07" height="1" fill="#cdd3de"/><rect x="46.01" y="168" width="5.35" height="1" fill="#cdd3de"/><rect x="51.36" y="168" width="1.07" height="1" fill="#cdd3de"/><rect x="52.43" y="168" width="10.70" height="1" fill="#cdd3de"/><rect x="63.13" y="168" width="1.07" height="1" fill="#cdd3de"/><rect x="65.27" y="168" width="5.35" height="1" fill="#cdd3de"/><rect x="70.62" y="168" width="1.07" height="1" fill="#cdd3de"/><rect x="71.69" y="168" width="5.35" height="1" fill="#cdd3de"/><rect x="77.04" y="168" width="1.07" height="1" fill="#5fb3b3"/><rect x="78.11" y="168" width="1.07" height="1" fill="#f99157"/><rect x="79.18" y="168" width="1.07" height="1" fill="#5fb3b3"/><rect x="80.25" y="168" width="1.07" height="1" fill="#cdd3de"/><rect x="4.28" y="172" width="1.07" height="1" fill="#65737e"/><rect x="6.42" y="172" width="9.63" height="1" fill="#65737e"/><rect x="17.12" y="172" width="10.70" height="1" fill="#65737e"/><rect x="28.89" y="172" width="3.21" height="1" fill="#65737e"/><rect x="33.17" y="172" width="4.28" height="1" fill="#65737e"/><rect x="38.52" y="172" width="5.35" height="1" fill="#65737e"/><rect x="4.28" y="174" width="11.77" height="1" fill="#cdd3de"/><rect x="17.12" y="174" width="1.07" height="1" fill="#5fb3b3"/><rect x="19.26" y="174" width="3.21" height="1" fill="#f99157"/><rect x="4.28" y="176" width="10.70" height="1" fill="#cdd3de"/><rect x="16.05" y="176" width="1.07" height="1" fill="#5fb3b3"/><rect x="18.19" y="176" width="3.21" height="1" fill="#f99157"/><rect x="4.28" y="178" width="3.21" height="1" fill="#c594c5"/><rect x="8.56" y="178" width="7.49" height="1" fill="#cdd3de"/><rect x="16.05" y="178" width="1.07" height="1" fill="#cdd3de"/><rect x="18.19" y="178" width="3.21" height="1" fill="#cdd3de"/><rect x="22.47" y="178" width="2.14" height="1" fill="#c594c5"/><rect x="25.68" y="178" width="9.63" height="1" fill="#6699cc"/><rect x="35.31" y="178" width="1.07" height="1" fill="#cdd3de"/><rect x="36.38" y="178" width="7.49" height="1" fill="#cdd3de"/><rect x="43.87" y="178" width="1.07" height="1" fill="#5fb3b3"/><rect x="44.94" y="178" width="1.07" height="1" fill="#f99157"/><rect x="46.01" y="178" width="1.07" height="1" fill="#cdd3de"/><rect x="47.08" y="178" width="1.07" height="1" fill="#5fb3b3"/><rect x="48.15" y="178" width="1.07" height="1" fill="#cdd3de"/><rect x="49.22" y="178" width="1.07" height="1" fill="#cdd3de"/><rect x="8.56" y="180" width="7.49" height="1" fill="#cdd3de"/><rect x="17.12" y="180" width="2.14" height="1" fill="#5fb3b3"/><rect x="20.33" y="180" width="1.07" height="1" fill="#f99157"/><rect x="22.47" y="180" width="1.07" height="1" fill="#65737e"/><rect x="24.61" y="180" width="7.49" height="1" fill="#65737e"/><rect x="33.17" y="180" width="2.14" height="1" fill="#65737e"/><rect x="36.38" y="180" width="7.49" height="1" fill="#65737e"/><rect x="44.94" y="180" width="10.70" height="1" fill="#65737e"/><rect x="8.56" y="182" width="9.63" height="1" fill="#cdd3de"/><rect x="19.26" y="182" width="1.07" height="1" fill="#5fb3b3"/><rect x="21.40" y="182" width="5.35" height="1" fill="#cdd3de"/><rect x="26.75" y="182" width="1.07" height="1" fill="#5fb3b3"/><rect x="27.82" y="182" width="1.07" height="1" fill="#cdd3de"/><rect x="28.89" y="182" width="1.07" height="1" fill="#cdd3de"/><rect x="31.03" y="182" width="1.07" height="1" fill="#f99157"/><rect x="32.10" y="182" width="1.07" height="1" fill="#5fb3b3"/><rect x="33.17" y="182" width="7.49" height="1" fill="#cdd3de"/><rect x="40.66" y="182" width="1.07" height="1" fill="#cdd3de"/><rect x="41.73" y="182" width="1.07" height="1" fill="#f99157"/><rect x="42.80" y="182" width="1.07" height="1" fill="#5fb3b3"/><rect x="43.87" y="182" width="1.07" height="1" fill="#cdd3de"/><rect x="44.94" y="182" width="7.49" height="1" fill="#cdd3de"/><rect x="53.50" y="182" width="1.07" height="1" fill="#5fb3b3"/><rect x="55.64" y="182" width="1.07" height="1" fill="#f99157"/><rect x="56.71" y="182" width="1.07" height="1" fill="#cdd3de"/><rect x="57.78" y="182" width="1.07" height="1" fill="#5fb3b3"/><rect x="8.56" y="184" width="10.70" height="1" fill="#cdd3de"/><rect x="20.33" y="184" width="1.07" height="1" fill="#5fb3b3"/><rect x="22.47" y="184" width="6.42" height="1" fill="#cdd3de"/><rect x="28.89" y="184" width="1.07" height="1" fill="#5fb3b3"/><rect x="29.96" y="184" width="1.07" height="1" fill="#cdd3de"/><rect x="31.03" y="184" width="1.07" height="1" fill="#cdd3de"/><rect x="33.17" y="184" width="7.49" height="1" fill="#cdd3de"/><rect x="40.66" y="184" width="1.07" height="1" fill="#5fb3b3"/><rect x="8.56" y="186" width="4.28" height="1" fill="#cdd3de"/><rect x="13.91" y="186" width="1.07" height="1" fill="#5fb3b3"/><rect x="16.05" y="186" width="2.14" height="1" fill="#6699cc"/><rect x="18.19" y="186" width="1.07" height="1" fill="#6699cc"/><rect x="19.26" y="186" width="6.42" height="1" fill="#6699cc"/><rect x="25.68" y="186" width="1.07" height="1" fill="#cdd3de"/><rect x="26.75" y="186" width="1.07" height="1" fill="#cdd3de"/><rect x="27.82" y="186" width="9.63" height="1" fill="#cdd3de"/><rect x="37.45" y="186" width="1.07" height="1" fill="#cdd3de"/><rect x="27.82" y="188" width="10.70" height="1" fill="#cdd3de"/><rect x="38.52" y="188" width="1.07" height="1" fill="#5fb3b3"/><rect x="39.59" y="188" width="1.07" height="1" fill="#cdd3de"/><rect x="40.66" y="188" width="1.07" height="1" fill="#cdd3de"/><rect x="42.80" y="188" width="2.14" height="1" fill="#cdd3de"/><rect x="44.94" y="188" width="1.07" height="1" fill="#cdd3de"/><rect x="46.01" y="188" width="7.49" height="1" fill="#cdd3de"/><rect x="53.50" y="188" width="1.07" height="1" fill="#5fb3b3"/><rect x="54.57" y="188" width="1.07" height="1" fill="#cdd3de"/><rect x="55.64" y="188" width="1.07" height="1" fill="#cdd3de"/><rect x="56.71" y="188" width="1.07" height="1" fill="#cdd3de"/><rect x="57.78" y="188" width="6.42" height="1" fill="#6699cc"/><rect x="64.20" y="188" width="1.07" height="1" fill="#cdd3de"/><rect x="65.27" y="188" width="2.14" height="1" fill="#cdd3de"/><rect x="67.41" y="188" width="1.07" height="1" fill="#cdd3de"/><rect x="68.48" y="188" width="7.49" height="1" fill="#cdd3de"/><rect x="75.97" y="188" width="1.07" height="1" fill="#cdd3de"/><rect x="8.56" y="190" width="4.28" height="1" fill="#cdd3de"/><rect x="13.91" y="190" width="1.07" height="1" fill="#5fb3b3"/><rect x="16.05" y="190" width="3.21" height="1" fill="#6699cc"/><rect x="19.26" y="190" width="1.07" height="1" fill="#cdd3de"/><rect x="20.33" y="190" width="4.28" height="1" fill="#cdd3de"/><rect x="24.61" y="190" width="1.07" height="1" fill="#cdd3de"/><rect x="26.75" y="190" width="10.70" height="1" fill="#cdd3de"/><rect x="37.45" y="190" width="1.07" height="1" fill="#cdd3de"/><rect x="8.56" y="192" width="4.28" height="1" fill="#cdd3de"/><rect x="13.91" y="192" width="1.07" height="1" fill="#5fb3b3"/><rect x="16.05" y="192" width="4.28" height="1" fill="#cdd3de"/><rect x="20.33" y="192" width="1.07" height="1" fill="#5fb3b3"/><rect x="21.40" y="192" width="4.28" height="1" fill="#cdd3de"/><rect x="25.68" y="192" width="1.07" height="1" fill="#cdd3de"/><rect x="27.82" y="192" width="1.07" height="1" fill="#cdd3de"/><rect x="28.89" y="192" width="1.07" height="1" fill="#5fb3b3"/><rect x="8.56" y="194" width="14.98" height="1" fill="#6699cc"/><rect x="23.54" y="194" width="1.07" height="1" fill="#cdd3de"/><rect x="24.61" y="194" width="2.14" height="1" fill="#cdd3de"/><rect x="26.75" y="194" width="1.07" height="1" fill="#cdd3de"/><rect x="28.89" y="194" width="3.21" height="1" fill="#cdd3de"/><rect x="32.10" y="194" width="1.07" height="1" fill="#cdd3de"/><rect x="34.24" y="194" width="4.28" height="1" fill="#cdd3de"/><rect x="38.52" y="194" width="1.07" height="1" fill="#cdd3de"/><rect x="40.66" y="194" width="6.42" height="1" fill="#cdd3de"/><rect x="47.08" y="194" width="1.07" height="1" fill="#5fb3b3"/><rect x="48.15" y="194" width="11.77" height="1" fill="#cdd3de"/><rect x="59.92" y="194" width="1.07" height="1" fill="#cdd3de"/><rect x="0.00" y="198" width="3.21" height="1" fill="#c594c5"/><rect x="4.28" y="198" width="10.70" height="1" fill="#6699cc"/><rect x="14.98" y="198" width="1.07" height="1" fill="#cdd3de"/><rect x="16.05" y="198" width="1.07" height="1" fill="#cdd3de"/><rect x="17.12" y="198" width="1.07" height="1" fill="#cdd3de"/><rect x="4.28" y="200" width="8.56" height="1" fill="#99c794"/><rect x="13.91" y="200" width="5.35" height="1" fill="#99c794"/><rect x="20.33" y="200" width="13.91" height="1" fill="#99c794"/><rect x="4.28" y="202" width="6.42" height="1" fill="#cdd3de"/><rect x="11.77" y="202" width="1.07" height="1" fill="#5fb3b3"/><rect x="13.91" y="202" width="8.56" height="1" fill="#6699cc"/><rect x="22.47" y="202" width="1.07" height="1" fill="#6699cc"/><rect x="23.54" y="202" width="14.98" height="1" fill="#6699cc"/><rect x="38.52" y="202" width="1.07" height="1" fill="#cdd3de"/><rect x="39.59" y="202" width="11.77" height="1" fill="#cdd3de"/><rect x="51.36" y="202" width="1.07" height="1" fill="#5fb3b3"/><rect x="52.43" y="202" width="7.49" height="1" fill="#99c794"/><rect x="60.99" y="202" width="5.35" height="1" fill="#99c794"/><rect x="67.41" y="202" width="5.35" height="1" fill="#99c794"/><rect x="72.76" y="202" width="1.07" height="1" fill="#cdd3de"/><rect x="4.28" y="204" width="6.42" height="1" fill="#6699cc"/><rect x="10.70" y="204" width="1.07" height="1" fill="#6699cc"/><rect x="11.77" y="204" width="12.84" height="1" fill="#6699cc"/><rect x="24.61" y="204" width="1.07" height="1" fill="#cdd3de"/><rect x="25.68" y="204" width="7.49" height="1" fill="#99c794"/><rect x="33.17" y="204" width="1.07" height="1" fill="#cdd3de"/><rect x="35.31" y="204" width="4.28" height="1" fill="#cdd3de"/><rect x="39.59" y="204" width="1.07" height="1" fill="#5fb3b3"/><rect x="40.66" y="204" width="8.56" height="1" fill="#99c794"/><rect x="49.22" y="204" width="1.07" height="1" fill="#cdd3de"/><rect x="51.36" y="204" width="4.28" height="1" fill="#cdd3de"/><rect x="55.64" y="204" width="1.07" height="1" fill="#5fb3b3"/><rect x="56.71" y="204" width="4.28" height="1" fill="#99c794"/><rect x="62.06" y="204" width="6.42" height="1" fill="#99c794"/><rect x="69.55" y="204" width="2.14" height="1" fill="#99c794"/><rect x="72.76" y="204" width="2.14" height="1" fill="#99c794"/><rect x="75.97" y="204" width="3.21" height="1" fill="#99c794"/><rect x="80.25" y="204" width="4.28" height="1" fill="#99c794"/><rect x="84.53" y="204" width="1.07" height="1" fill="#cdd3de"/><rect x="25.68" y="206" width="7.49" height="1" fill="#cdd3de"/><rect x="33.17" y="206" width="1.07" height="1" fill="#5fb3b3"/><rect x="34.24" y="206" width="1.07" height="1" fill="#f99157"/><rect x="35.31" y="206" width="1.07" height="1" fill="#cdd3de"/><rect x="37.45" y="206" width="4.28" height="1" fill="#cdd3de"/><rect x="41.73" y="206" width="1.07" height="1" fill="#5fb3b3"/><rect x="42.80" y="206" width="3.21" height="1" fill="#cdd3de"/><rect x="46.01" y="206" width="1.07" height="1" fill="#cdd3de"/><rect x="4.28" y="208" width="6.42" height="1" fill="#6699cc"/><rect x="10.70" y="208" width="1.07" height="1" fill="#6699cc"/><rect x="11.77" y="208" width="12.84" height="1" fill="#6699cc"/><rect x="24.61" y="208" width="1.07" height="1" fill="#cdd3de"/><rect x="25.68" y="208" width="7.49" height="1" fill="#99c794"/><rect x="33.17" y="208" width="1.07" height="1" fill="#cdd3de"/><rect x="35.31" y="208" width="4.28" height="1" fill="#cdd3de"/><rect x="39.59" y="208" width="1.07" height="1" fill="#5fb3b3"/><rect x="40.66" y="208" width="10.70" height="1" fill="#99c794"/><rect x="51.36" y="208" width="1.07" height="1" fill="#cdd3de"/><rect x="25.68" y="210" width="4.28" height="1" fill="#cdd3de"/><rect x="29.96" y="210" width="1.07" height="1" fill="#5fb3b3"/><rect x="31.03" y="210" width="4.28" height="1" fill="#99c794"/><rect x="36.38" y="210" width="3.21" height="1" fill="#99c794"/><rect x="40.66" y="210" width="4.28" height="1" fill="#99c794"/><rect x="46.01" y="210" width="10.70" height="1" fill="#99c794"/><rect x="57.78" y="210" width="7.49" height="1" fill="#99c794"/><rect x="65.27" y="210" width="1.07" height="1" fill="#cdd3de"/><rect x="25.68" y="212" width="6.42" height="1" fill="#cdd3de"/><rect x="32.10" y="212" width="1.07" height="1" fill="#5fb3b3"/><rect x="33.17" y="212" width="12.84" height="1" fill="#99c794"/><rect x="46.01" y="212" width="1.07" height="1" fill="#cdd3de"/><rect x="4.28" y="214" width="6.42" height="1" fill="#6699cc"/><rect x="10.70" y="214" width="1.07" height="1" fill="#6699cc"/><rect x="11.77" y="214" width="12.84" height="1" fill="#6699cc"/><rect x="24.61" y="214" width="1.07" height="1" fill="#cdd3de"/><rect x="25.68" y="214" width="7.49" height="1" fill="#99c794"/><rect x="33.17" y="214" width="1.07" height="1" fill="#cdd3de"/><rect x="35.31" y="214" width="4.28" height="1" fill="#cdd3de"/><rect x="39.59" y="214" width="1.07" height="1" fill="#5fb3b3"/><rect x="40.66" y="214" width="10.70" height="1" fill="#99c794"/><rect x="51.36" y="214" width="1.07" height="1" fill="#cdd3de"/><rect x="53.50" y="214" width="4.28" height="1" fill="#cdd3de"/><rect x="57.78" y="214" width="1.07" height="1" fill="#5fb3b3"/><rect x="58.85" y="214" width="8.56" height="1" fill="#99c794"/><rect x="68.48" y="214" width="2.14" height="1" fill="#99c794"/><rect x="71.69" y="214" width="3.21" height="1" fill="#99c794"/><rect x="75.97" y="214" width="8.56" height="1" fill="#99c794"/><rect x="84.53" y="214" width="1.07" height="1" fill="#cdd3de"/><rect x="25.68" y="216" width="7.49" height="1" fill="#cdd3de"/><rect x="33.17" y="216" width="1.07" height="1" fill="#5fb3b3"/><rect x="34.24" y="216" width="4.28" height="1" fill="#6699cc"/><rect x="38.52" y="216" width="1.07" height="1" fill="#6699cc"/><rect x="39.59" y="216" width="4.28" height="1" fill="#6699cc"/><rect x="43.87" y="216" width="1.07" height="1" fill="#cdd3de"/><rect x="44.94" y="216" width="1.07" height="1" fill="#cdd3de"/><rect x="46.01" y="216" width="1.07" height="1" fill="#cdd3de"/><rect x="48.15" y="216" width="7.49" height="1" fill="#cdd3de"/><rect x="55.64" y="216" width="1.07" height="1" fill="#5fb3b3"/><rect x="56.71" y="216" width="7.49" height="1" fill="#99c794"/><rect x="64.20" y="216" width="1.07" height="1" fill="#cdd3de"/><rect x="4.28" y="220" width="4.28" height="1" fill="#cdd3de"/><rect x="9.63" y="220" width="1.07" height="1" fill="#5fb3b3"/><rect x="11.77" y="220" width="6.42" height="1" fill="#6699cc"/><rect x="18.19" y="220" width="1.07" height="1" fill="#6699cc"/><rect x="19.26" y="220" width="10.70" height="1" fill="#6699cc"/><rect x="29.96" y="220" width="1.07" height="1" fill="#cdd3de"/><rect x="31.03" y="220" width="1.07" height="1" fill="#cdd3de"/><rect x="4.28" y="224" width="6.42" height="1" fill="#c594c5"/><rect x="11.77" y="224" width="4.28" height="1" fill="#cdd3de"/><rect x="0.00" y="228" width="2.14" height="1" fill="#c594c5"/><rect x="3.21" y="228" width="8.56" height="1" fill="#cdd3de"/><rect x="12.84" y="228" width="2.14" height="1" fill="#5fb3b3"/><rect x="16.05" y="228" width="10.70" height="1" fill="#99c794"/><rect x="26.75" y="228" width="1.07" height="1" fill="#cdd3de"/><rect x="4.28" y="230" width="3.21" height="1" fill="#cdd3de"/><rect x="7.49" y="230" width="1.07" height="1" fill="#cdd3de"/><rect x="8.56" y="230" width="4.28" height="1" fill="#cdd3de"/><rect x="12.84" y="230" width="1.07" height="1" fill="#cdd3de"/><rect x="13.91" y="230" width="7.49" height="1" fill="#cdd3de"/><rect x="22.47" y="230" width="1.07" height="1" fill="#5fb3b3"/><rect x="24.61" y="230" width="4.28" height="1" fill="#cdd3de"/><rect x="31.03" y="230" width="1.07" height="1" fill="#65737e"/><rect x="33.17" y="230" width="3.21" height="1" fill="#65737e"/><rect x="37.45" y="230" width="3.21" height="1" fill="#65737e"/><rect x="41.73" y="230" width="3.21" height="1" fill="#65737e"/><rect x="46.01" y="230" width="9.63" height="1" fill="#65737e"/><rect x="4.28" y="234" width="4.28" height="1" fill="#cdd3de"/><rect x="9.63" y="234" width="1.07" height="1" fill="#5fb3b3"/><rect x="11.77" y="234" width="10.70" height="1" fill="#6699cc"/><rect x="22.47" y="234" width="1.07" height="1" fill="#cdd3de"/><rect x="23.54" y="234" width="1.07" height="1" fill="#cdd3de"/><rect x="4.28" y="238" width="8.56" height="1" fill="#cdd3de"/><rect x="13.91" y="238" width="1.07" height="1" fill="#5fb3b3"/><rect x="16.05" y="238" width="2.14" height="1" fill="#cdd3de"/><rect x="18.19" y="238" width="1.07" height="1" fill="#cdd3de"/><rect x="19.26" y="238" width="4.28" height="1" fill="#6699cc"/><rect x="23.54" y="238" width="1.07" height="1" fill="#6699cc"/><rect x="24.61" y="238" width="4.28" height="1" fill="#6699cc"/><rect x="28.89" y="238" width="1.07" height="1" fill="#cdd3de"/><rect x="29.96" y="238" width="3.21" height="1" fill="#cdd3de"/><rect x="33.17" y="238" width="1.07" height="1" fill="#cdd3de"/><rect x="34.24" y="238" width="10.70" height="1" fill="#cdd3de"/><rect x="44.94" y="238" width="1.07" height="1" fill="#cdd3de"/><rect x="47.08" y="238" width="4.28" height="1" fill="#cdd3de"/><rect x="51.36" y="238" width="1.07" height="1" fill="#5fb3b3"/><rect x="52.43" y="238" width="4.28" height="1" fill="#cdd3de"/><rect x="56.71" y="238" width="1.07" height="1" fill="#cdd3de"/><rect x="57.78" y="238" width="8.56" height="1" fill="#cdd3de"/><rect x="66.34" y="238" width="1.07" height="1" fill="#5fb3b3"/><rect x="67.41" y="238" width="1.07" height="1" fill="#5fb3b3"/><rect x="68.48" y="238" width="1.07" height="1" fill="#f99157"/><rect x="69.55" y="238" width="1.07" height="1" fill="#5fb3b3"/><rect x="70.62" y="238" width="1.07" height="1" fill="#cdd3de"/><rect x="29.96" y="240" width="22.47" height="1" fill="#99c794"/><rect x="52.43" y="240" width="1.07" height="1" fill="#cdd3de"/><rect x="54.57" y="240" width="22.47" height="1" fill="#99c794"/><rect x="77.04" y="240" width="1.07" height="1" fill="#cdd3de"/><rect x="4.28" y="242" width="10.70" height="1" fill="#cdd3de"/><rect x="16.05" y="242" width="1.07" height="1" fill="#5fb3b3"/><rect x="18.19" y="242" width="2.14" height="1" fill="#cdd3de"/><rect x="20.33" y="242" width="1.07" height="1" fill="#cdd3de"/><rect x="21.40" y="242" width="4.28" height="1" fill="#6699cc"/><rect x="25.68" y="242" width="1.07" height="1" fill="#6699cc"/><rect x="26.75" y="242" width="4.28" height="1" fill="#6699cc"/><rect x="31.03" y="242" width="1.07" height="1" fill="#cdd3de"/><rect x="32.10" y="242" width="3.21" height="1" fill="#cdd3de"/><rect x="35.31" y="242" width="1.07" height="1" fill="#cdd3de"/><rect x="36.38" y="242" width="8.56" height="1" fill="#cdd3de"/><rect x="44.94" y="242" width="1.07" height="1" fill="#cdd3de"/><rect x="47.08" y="242" width="21.40" height="1" fill="#99c794"/><rect x="68.48" y="242" width="1.07" height="1" fill="#cdd3de"/><rect x="32.10" y="244" width="4.28" height="1" fill="#cdd3de"/><rect x="36.38" y="244" width="1.07" height="1" fill="#5fb3b3"/><rect x="37.45" y="244" width="4.28" height="1" fill="#cdd3de"/><rect x="41.73" y="244" width="1.07" height="1" fill="#cdd3de"/><rect x="42.80" y="244" width="8.56" height="1" fill="#cdd3de"/><rect x="51.36" y="244" width="1.07" height="1" fill="#5fb3b3"/><rect x="52.43" y="244" width="1.07" height="1" fill="#5fb3b3"/><rect x="53.50" y="244" width="1.07" height="1" fill="#f99157"/><rect x="54.57" y="244" width="1.07" height="1" fill="#5fb3b3"/><rect x="55.64" y="244" width="1.07" height="1" fill="#cdd3de"/><rect x="4.28" y="248" width="2.14" height="1" fill="#c594c5"/><rect x="7.49" y="248" width="3.21" height="1" fill="#c594c5"/><rect x="11.77" y="248" width="2.14" height="1" fill="#cdd3de"/><rect x="13.91" y="248" width="1.07" height="1" fill="#cdd3de"/><rect x="14.98" y="248" width="4.28" height="1" fill="#6699cc"/><rect x="19.26" y="248" width="1.07" height="1" fill="#6699cc"/><rect x="20.33" y="248" width="6.42" height="1" fill="#6699cc"/><rect x="26.75" y="248" width="1.07" height="1" fill="#cdd3de"/><rect x="27.82" y="248" width="10.70" height="1" fill="#cdd3de"/><rect x="38.52" y="248" width="1.07" height="1" fill="#cdd3de"/><rect x="39.59" y="248" width="1.07" height="1" fill="#cdd3de"/><rect x="8.56" y="250" width="5.35" height="1" fill="#c594c5"/><rect x="14.98" y="250" width="7.49" height="1" fill="#6699cc"/><rect x="22.47" y="250" width="1.07" height="1" fill="#cdd3de"/><rect x="23.54" y="250" width="1.07" height="1" fill="#cdd3de"/><rect x="24.61" y="250" width="5.35" height="1" fill="#99c794"/><rect x="31.03" y="250" width="3.21" height="1" fill="#99c794"/><rect x="35.31" y="250" width="11.77" height="1" fill="#99c794"/><rect x="48.15" y="250" width="3.21" height="1" fill="#99c794"/><rect x="52.43" y="250" width="3.21" height="1" fill="#99c794"/><rect x="56.71" y="250" width="16.05" height="1" fill="#99c794"/><rect x="24.61" y="252" width="32.10" height="1" fill="#99c794"/><rect x="56.71" y="252" width="1.07" height="1" fill="#cdd3de"/><rect x="57.78" y="252" width="1.07" height="1" fill="#cdd3de"/><rect x="58.85" y="252" width="6.42" height="1" fill="#6699cc"/><rect x="65.27" y="252" width="1.07" height="1" fill="#cdd3de"/><rect x="66.34" y="252" width="10.70" height="1" fill="#cdd3de"/><rect x="77.04" y="252" width="1.07" height="1" fill="#cdd3de"/><rect x="78.11" y="252" width="1.07" height="1" fill="#cdd3de"/><rect x="4.28" y="256" width="2.14" height="1" fill="#c594c5"/><rect x="7.49" y="256" width="4.28" height="1" fill="#cdd3de"/><rect x="11.77" y="256" width="1.07" height="1" fill="#cdd3de"/><rect x="12.84" y="256" width="8.56" height="1" fill="#cdd3de"/><rect x="21.40" y="256" width="1.07" height="1" fill="#cdd3de"/><rect x="8.56" y="258" width="5.35" height="1" fill="#6699cc"/><rect x="13.91" y="258" width="1.07" height="1" fill="#6699cc"/><rect x="14.98" y="258" width="12.84" height="1" fill="#6699cc"/><rect x="27.82" y="258" width="1.07" height="1" fill="#cdd3de"/><rect x="28.89" y="258" width="1.07" height="1" fill="#cdd3de"/><rect x="4.28" y="260" width="4.28" height="1" fill="#c594c5"/><rect x="8.56" y="260" width="1.07" height="1" fill="#cdd3de"/><rect x="8.56" y="262" width="5.35" height="1" fill="#6699cc"/><rect x="13.91" y="262" width="1.07" height="1" fill="#6699cc"/><rect x="14.98" y="262" width="12.84" height="1" fill="#6699cc"/><rect x="27.82" y="262" width="1.07" height="1" fill="#cdd3de"/><rect x="28.89" y="262" width="1.07" height="1" fill="#cdd3de"/><rect x="8.56" y="264" width="5.35" height="1" fill="#6699cc"/><rect x="13.91" y="264" width="1.07" height="1" fill="#6699cc"/><rect x="14.98" y="264" width="10.70" height="1" fill="#6699cc"/><rect x="25.68" y="264" width="1.07" height="1" fill="#cdd3de"/><rect x="26.75" y="264" width="4.28" height="1" fill="#cdd3de"/><rect x="31.03" y="264" width="1.07" height="1" fill="#cdd3de"/><rect x="32.10" y="264" width="6.42" height="1" fill="#cdd3de"/><rect x="38.52" y="264" width="1.07" height="1" fill="#cdd3de"/><rect x="8.56" y="266" width="3.21" height="1" fill="#cdd3de"/><rect x="11.77" y="266" width="1.07" height="1" fill="#cdd3de"/><rect x="12.84" y="266" width="6.42" height="1" fill="#cdd3de"/><rect x="20.33" y="266" width="1.07" height="1" fill="#5fb3b3"/><rect x="22.47" y="266" width="4.28" height="1" fill="#cdd3de"/><rect x="26.75" y="266" width="1.07" height="1" fill="#cdd3de"/><rect x="27.82" y="266" width="6.42" height="1" fill="#cdd3de"/><rect x="4.28" y="268" width="3.21" height="1" fill="#cdd3de"/><rect x="8.56" y="268" width="1.07" height="1" fill="#5fb3b3"/><rect x="10.70" y="268" width="5.35" height="1" fill="#6699cc"/><rect x="16.05" y="268" width="1.07" height="1" fill="#6699cc"/><rect x="17.12" y="268" width="3.21" height="1" fill="#6699cc"/><rect x="20.33" y="268" width="1.07" height="1" fill="#cdd3de"/><rect x="21.40" y="268" width="8.56" height="1" fill="#cdd3de"/><rect x="29.96" y="268" width="1.07" height="1" fill="#cdd3de"/><rect x="32.10" y="268" width="10.70" height="1" fill="#cdd3de"/><rect x="42.80" y="268" width="1.07" height="1" fill="#cdd3de"/><rect x="44.94" y="268" width="5.35" height="1" fill="#cdd3de"/><rect x="50.29" y="268" width="1.07" height="1" fill="#cdd3de"/><rect x="51.36" y="268" width="4.28" height="1" fill="#cdd3de"/><rect x="55.64" y="268" width="1.07" height="1" fill="#cdd3de"/><rect x="4.28" y="272" width="5.35" height="1" fill="#c594c5"/><rect x="10.70" y="272" width="11.77" height="1" fill="#99c794"/><rect x="23.54" y="272" width="7.49" height="1" fill="#99c794"/><rect x="32.10" y="272" width="5.35" height="1" fill="#99c794"/><rect x="37.45" y="272" width="1.07" height="1" fill="#cdd3de"/><rect x="38.52" y="272" width="6.42" height="1" fill="#6699cc"/><rect x="44.94" y="272" width="1.07" height="1" fill="#cdd3de"/><rect x="46.01" y="272" width="10.70" height="1" fill="#cdd3de"/><rect x="56.71" y="272" width="1.07" height="1" fill="#cdd3de"/><rect x="4.28" y="276" width="1.07" height="1" fill="#65737e"/><rect x="6.42" y="276" width="6.42" height="1" fill="#65737e"/><rect x="13.91" y="276" width="2.14" height="1" fill="#65737e"/><rect x="17.12" y="276" width="1.07" height="1" fill="#65737e"/><rect x="19.26" y="276" width="5.35" height="1" fill="#65737e"/><rect x="25.68" y="276" width="5.35" height="1" fill="#65737e"/><rect x="4.28" y="278" width="2.14" height="1" fill="#cdd3de"/><rect x="7.49" y="278" width="1.07" height="1" fill="#5fb3b3"/><rect x="9.63" y="278" width="3.21" height="1" fill="#f99157"/><rect x="13.91" y="278" width="1.07" height="1" fill="#5fb3b3"/><rect x="16.05" y="278" width="2.14" height="1" fill="#6699cc"/><rect x="18.19" y="278" width="1.07" height="1" fill="#6699cc"/><rect x="19.26" y="278" width="4.28" height="1" fill="#6699cc"/><rect x="23.54" y="278" width="1.07" height="1" fill="#cdd3de"/><rect x="24.61" y="278" width="1.07" height="1" fill="#cdd3de"/><rect x="25.68" y="278" width="3.21" height="1" fill="#f99157"/><rect x="28.89" y="278" width="1.07" height="1" fill="#cdd3de"/><rect x="31.03" y="278" width="3.21" height="1" fill="#f99157"/><rect x="34.24" y="278" width="1.07" height="1" fill="#cdd3de"/><rect x="36.38" y="278" width="1.07" height="1" fill="#f99157"/><rect x="37.45" y="278" width="1.07" height="1" fill="#cdd3de"/><rect x="38.52" y="278" width="1.07" height="1" fill="#cdd3de"/><rect x="40.66" y="278" width="5.35" height="1" fill="#cdd3de"/><rect x="46.01" y="278" width="1.07" height="1" fill="#5fb3b3"/><rect x="47.08" y="278" width="2.14" height="1" fill="#cdd3de"/><rect x="49.22" y="278" width="1.07" height="1" fill="#cdd3de"/><rect x="50.29" y="278" width="5.35" height="1" fill="#cdd3de"/><rect x="55.64" y="278" width="1.07" height="1" fill="#cdd3de"/><rect x="4.28" y="280" width="3.21" height="1" fill="#c594c5"/><rect x="8.56" y="280" width="1.07" height="1" fill="#cdd3de"/><rect x="10.70" y="280" width="2.14" height="1" fill="#c594c5"/><rect x="13.91" y="280" width="6.42" height="1" fill="#6699cc"/><rect x="20.33" y="280" width="1.07" height="1" fill="#cdd3de"/><rect x="21.40" y="280" width="1.07" height="1" fill="#f99157"/><rect x="22.47" y="280" width="1.07" height="1" fill="#cdd3de"/><rect x="23.54" y="280" width="1.07" height="1" fill="#cdd3de"/><rect x="8.56" y="282" width="1.07" height="1" fill="#cdd3de"/><rect x="9.63" y="282" width="1.07" height="1" fill="#cdd3de"/><rect x="11.77" y="282" width="1.07" height="1" fill="#cdd3de"/><rect x="12.84" y="282" width="1.07" height="1" fill="#5fb3b3"/><rect x="14.98" y="282" width="9.63" height="1" fill="#6699cc"/><rect x="24.61" y="282" width="1.07" height="1" fill="#cdd3de"/><rect x="25.68" y="282" width="3.21" height="1" fill="#cdd3de"/><rect x="28.89" y="282" width="1.07" height="1" fill="#cdd3de"/><rect x="31.03" y="282" width="2.14" height="1" fill="#cdd3de"/><rect x="33.17" y="282" width="1.07" height="1" fill="#cdd3de"/><rect x="4.28" y="286" width="8.56" height="1" fill="#cdd3de"/><rect x="13.91" y="286" width="1.07" height="1" fill="#5fb3b3"/><rect x="16.05" y="286" width="1.07" height="1" fill="#5fb3b3"/><rect x="17.12" y="286" width="12.84" height="1" fill="#99c794"/><rect x="29.96" y="286" width="1.07" height="1" fill="#cdd3de"/><rect x="32.10" y="286" width="12.84" height="1" fill="#99c794"/><rect x="44.94" y="286" width="1.07" height="1" fill="#cdd3de"/><rect x="47.08" y="286" width="12.84" height="1" fill="#99c794"/><rect x="59.92" y="286" width="1.07" height="1" fill="#cdd3de"/><rect x="17.12" y="288" width="12.84" height="1" fill="#99c794"/><rect x="29.96" y="288" width="1.07" height="1" fill="#cdd3de"/><rect x="32.10" y="288" width="12.84" height="1" fill="#99c794"/><rect x="44.94" y="288" width="1.07" height="1" fill="#5fb3b3"/><rect x="4.28" y="290" width="3.21" height="1" fill="#c594c5"/><rect x="8.56" y="290" width="7.49" height="1" fill="#cdd3de"/><rect x="17.12" y="290" width="2.14" height="1" fill="#c594c5"/><rect x="20.33" y="290" width="8.56" height="1" fill="#cdd3de"/><rect x="28.89" y="290" width="1.07" height="1" fill="#cdd3de"/><rect x="8.56" y="292" width="5.35" height="1" fill="#c594c5"/><rect x="14.98" y="292" width="87.74" height="1" fill="#99c794"/><rect x="8.56" y="294" width="5.35" height="1" fill="#c594c5"/><rect x="14.98" y="294" width="5.35" height="1" fill="#99c794"/><rect x="21.40" y="294" width="3.21" height="1" fill="#99c794"/><rect x="25.68" y="294" width="13.91" height="1" fill="#99c794"/><rect x="39.59" y="294" width="1.07" height="1" fill="#cdd3de"/><rect x="40.66" y="294" width="6.42" height="1" fill="#6699cc"/><rect x="47.08" y="294" width="1.07" height="1" fill="#cdd3de"/><rect x="48.15" y="294" width="7.49" height="1" fill="#cdd3de"/><rect x="55.64" y="294" width="1.07" height="1" fill="#cdd3de"/><rect x="8.56" y="296" width="4.28" height="1" fill="#6699cc"/><rect x="12.84" y="296" width="1.07" height="1" fill="#cdd3de"/><rect x="13.91" y="296" width="3.21" height="1" fill="#cdd3de"/><rect x="17.12" y="296" width="1.07" height="1" fill="#cdd3de"/><rect x="19.26" y="296" width="7.49" height="1" fill="#cdd3de"/><rect x="26.75" y="296" width="1.07" height="1" fill="#cdd3de"/><rect x="4.28" y="300" width="3.21" height="1" fill="#6699cc"/><rect x="7.49" y="300" width="1.07" height="1" fill="#6699cc"/><rect x="8.56" y="300" width="4.28" height="1" fill="#6699cc"/><rect x="12.84" y="300" width="1.07" height="1" fill="#cdd3de"/><rect x="13.91" y="300" width="1.07" height="1" fill="#cdd3de"/></svg>
<div class="abs" style="left:1360px;top:58px;width:6px;height:690px;background:#272b33;box-shadow:-1px 0 1px rgba(0,0,0,.25)"></div><div class="abs" style="left:1360px;top:58px;width:6px;height:161px;background:#2e323d"></div>
<div id="status">
  <svg class="abs" style="left:10px;top:5px" width="13" height="11"><rect x=".5" y=".5" width="12" height="10" fill="none" stroke="#8c919a"/><rect x="1" y="7" width="11" height="1" fill="#8c919a"/></svg>
  <div class="abs" style="left:27px;top:4px">Line 1, Column 1</div>
  <div class="abs" style="left:1154px;top:4px">Spaces: 4</div>
  <div class="abs" style="left:1247px;top:4px">Python</div>
</div>

<div id="dialog">
  <div id="dtitle">
    <svg class="abs" style="left:9px;top:4px" width="16" height="16" viewBox="0 0 16 16"><circle cx="8" cy="8" r="7.2" fill="#e05a5f"/><path d="M5.2 5.2 L10.8 10.8 M10.8 5.2 L5.2 10.8" stroke="#262a33" stroke-width="1.3"/></svg>
    <svg class="abs" style="left:38px;top:9px" width="7" height="7" viewBox="0 0 7 7"><path d="M1.3 0 H7 V5.7 Z M0 1.3 V7 H5.7 Z" fill="#a2a5ae"/></svg>
    <div class="abs" style="left:63px;top:5px;font-size:13px;font-weight:bold;color:#d6d9df">Open File</div>
  </div>
  <!-- toolbar -->
  <div class="btn" style="left:12px;top:39px;width:30px;height:32px"></div>
  <svg class="abs" style="left:20px;top:47px" width="15" height="17" viewBox="0 0 15 17"><rect x="0" y="0" width="11" height="14" fill="#fff"/><rect x="2" y="2.5" width="7" height="2" fill="#777"/><rect x="2" y="6.5" width="7" height="2" fill="#777"/><rect x="2" y="10.5" width="4" height="2" fill="#777"/><path d="M7.5 15.5 L13.3 5.5" stroke="#ff6d00" stroke-width="2.4"/><path d="M7 16 L7.6 14.2 L8.6 14.8 Z" fill="#333"/></svg>
  <div class="btn" style="left:54px;top:39px;width:24px;height:32px"></div>
  <svg class="abs" style="left:63px;top:51px" width="5" height="8"><path d="M0.2 3.6 L4.4 0 V7.2 Z" fill="#5d616b"/></svg>
  <div class="btn" style="left:78px;top:39px;width:72px;height:32px"></div>
  <svg class="abs" style="left:86px;top:47px" width="16" height="16" viewBox="0 0 16 16"><path d="M8 1 L15.5 8.5 H13.5 V15 H10 V11 H6 V15 H2.5 V8.5 H0.5 Z" fill="#fb8c00"/><rect x="11" y="2" width="2" height="4" fill="#fb8c00"/></svg>
  <div class="abs ptxt" style="left:104px;top:47px">tmbao</div>
  <div class="btn" style="left:150px;top:39px;width:65px;height:32px"></div>
  <div class="abs ptxt" style="left:160px;top:47px">Sources</div>
  <div class="btn" style="left:215px;top:39px;width:102px;height:32px"></div>
  <div class="abs ptxt" style="left:225px;top:47px">py-faster-rcnn</div>
  <div class="abs" style="left:317px;top:39px;width:46px;height:33px;background:#d9dcdf;border-left:2px solid #1e1e1e;border-top:2px solid #1e1e1e;border-right:1px solid #fff;border-bottom:1px solid #fff"></div>
  <div class="abs ptxt" style="left:324px;top:47px;font-weight:bold">tools</div>

  <!-- places -->
  <div class="abs" style="left:12px;top:83px;width:148px;height:394px;background:#fff;border-left:1px solid #a2a5aa"></div>
  <div class="abs" style="left:12px;top:83px;width:147px;height:23px;background:#f3f4f6;border-top:1px solid #a2a5aa;border-left:1px solid #a2a5aa;border-bottom:1px solid #a2a5aa"></div>
  <div class="abs" style="left:158px;top:84px;width:1px;height:22px;background:#202020"></div>
  <div class="abs dtxt" style="left:18px;top:88px;font-weight:bold;font-size:12.6px">Places</div>
  <div class="abs" style="left:16px;top:110px"><svg width="16" height="16" viewBox="0 0 16 16"><circle cx="6.5" cy="6.5" r="5" fill="#c7e4e2" stroke="#25a297" stroke-width="2.6"/><path d="M10 10 L14.5 14.5" stroke="#25a297" stroke-width="2.8" stroke-linecap="round"/></svg></div><div class="abs dtxt" style="left:36px;top:110px">Search</div><div class="abs" style="left:16px;top:134px"><svg width="16" height="16" viewBox="0 0 16 16"><rect x="2" y="0" width="10" height="7" fill="#ecebe0"/><path d="M3.5 2 H10.5 M3.5 4 H10.5" stroke="#7d7d78" stroke-width="1"/><rect x="0" y="5.5" width="16" height="10.5" fill="#f5a025"/><circle cx="11.5" cy="11.5" r="3.8" fill="#4caf50"/><path d="M9.8 11.5 L11.2 12.8 L13.3 10.3" stroke="#fff" stroke-width="1.1" fill="none"/></svg></div><div class="abs dtxt" style="left:36px;top:134px">Recently Used</div><div class="abs" style="left:16px;top:162px"><svg width="16" height="16" viewBox="0 0 16 16"><path d="M0 1 H6 L7 3 H16 V16 H0 Z" fill="#f9a825"/><path d="M0 1 H6.5 L7.5 3 H0 Z" fill="#e8691b"/><rect x="1.5" y="3" width="5" height="1.2" fill="#fff" opacity=".8"/></svg></div><div class="abs dtxt" style="left:36px;top:162px">/</div><div class="abs" style="left:16px;top:186px"><svg width="16" height="16" viewBox="0 0 16 16"><path d="M8 0.5 L16 8.5 H14 V15.5 H10.5 V11 H5.5 V15.5 H2 V8.5 H0 Z" fill="#fb8c00"/><rect x="11.5" y="1" width="2.5" height="5" fill="#fb8c00"/></svg></div><div class="abs dtxt" style="left:36px;top:186px">tmbao</div><div class="abs" style="left:16px;top:210px"><svg width="16" height="16" viewBox="0 0 16 16"><rect x="1" y="1" width="14" height="10" rx="2" fill="none" stroke="#fb8c00" stroke-width="2"/><path d="M6 3.5 H9 L10.5 5 V8.5 H6 Z" fill="none" stroke="#fb8c00" stroke-width="1"/><path d="M4 16 L6 12 H10 L12 16 Z" fill="#fb8c00"/></svg></div><div class="abs dtxt" style="left:36px;top:210px">Desktop</div><div class="abs" style="left:16px;top:234px"><svg width="16" height="16" viewBox="0 0 16 16"><rect x="2" y="1" width="12" height="15" fill="#6f8589"/><rect x="12" y="1" width="2" height="15" fill="#9fb0b2"/><circle cx="7.5" cy="7" r="4" fill="#1d3d4a"/><path d="M6 8 L10 13" stroke="#e8eef0" stroke-width="1.3"/><circle cx="7.5" cy="6.5" r="1.2" fill="#9fb0b2"/></svg></div><div class="abs dtxt" style="left:36px;top:234px">File System</div><div class="abs" style="left:16px;top:258px"><svg width="16" height="16" viewBox="0 0 16 16"><rect x="2" y="1" width="12" height="15" fill="#6f8589"/><rect x="12" y="1" width="2" height="15" fill="#9fb0b2"/><circle cx="7.5" cy="7" r="4" fill="#1d3d4a"/><path d="M6 8 L10 13" stroke="#e8eef0" stroke-width="1.3"/><circle cx="7.5" cy="6.5" r="1.2" fill="#9fb0b2"/></svg></div><div class="abs dtxt" style="left:36px;top:258px">Windows</div><div class="abs" style="left:16px;top:282px"><svg width="16" height="16" viewBox="0 0 16 16"><rect x="2" y="1" width="12" height="15" fill="#6f8589"/><rect x="12" y="1" width="2" height="15" fill="#9fb0b2"/><circle cx="7.5" cy="7" r="4" fill="#1d3d4a"/><path d="M6 8 L10 13" stroke="#e8eef0" stroke-width="1.3"/><circle cx="7.5" cy="6.5" r="1.2" fill="#9fb0b2"/></svg></div><div class="abs dtxt" style="left:36px;top:282px">Data</div><div class="abs" style="left:16px;top:310px"><svg width="16" height="16" viewBox="0 0 16 16"><path d="M3 1 H10 L14 5 V15 H3 Z" fill="#fff" stroke="#fb8c00" stroke-width="2" stroke-linejoin="round"/><path d="M5.5 8 H11.5 M5.5 10.5 H11.5 M5.5 13 H11.5" stroke="#fb8c00" stroke-width="1"/></svg></div><div class="abs dtxt" style="left:36px;top:310px">Documents</div><div class="abs" style="left:16px;top:334px"><svg width="16" height="16" viewBox="0 0 16 16"><path d="M5 2 H15 V12.5" fill="none" stroke="#fb8c00" stroke-width="2.4"/><path d="M5 2 V13" stroke="#fb8c00" stroke-width="2.4"/><circle cx="3" cy="13.2" r="2.8" fill="#fb8c00"/><circle cx="13" cy="12.7" r="2.8" fill="#fb8c00"/></svg></div><div class="abs dtxt" style="left:36px;top:334px">Music</div><div class="abs" style="left:16px;top:358px"><svg width="16" height="16" viewBox="0 0 16 16"><rect x="0" y="1" width="16" height="15" rx="2" fill="#fb8c00"/><path d="M2 12 L5 6 L8 9 L11 5 L14 10 V3 H2 Z" fill="#fff"/></svg></div><div class="abs dtxt" style="left:36px;top:358px">Pictures</div><div class="abs" style="left:16px;top:382px"><svg width="16" height="16" viewBox="0 0 16 16"><rect x="0" y="0" width="16" height="16" rx="2" fill="#fb8c00"/><rect x="1.5" y="2" width="2" height="2" fill="#fff"/><rect x="1.5" y="7" width="2" height="2" fill="#fff"/><rect x="1.5" y="12" width="2" height="2" fill="#fff"/><rect x="12.5" y="2" width="2" height="2" fill="#fff"/><rect x="12.5" y="7" width="2" height="2" fill="#fff"/><rect x="12.5" y="12" width="2" height="2" fill="#fff"/></svg></div><div class="abs dtxt" style="left:36px;top:382px">Videos</div><div class="abs" style="left:16px;top:406px"><svg width="16" height="16" viewBox="0 0 16 16"><path d="M1 9 V15 H15 V9" fill="none" stroke="#fb8c00" stroke-width="2"/><path d="M6.8 0 H9.2 V6 H12 L8 10.5 L4 6 H6.8 Z" fill="#fb8c00"/></svg></div><div class="abs dtxt" style="left:36px;top:406px">Downloads</div><div class="abs" style="left:16px;top:430px"><svg width="16" height="16" viewBox="0 0 16 16"><path d="M0 1 H6 L7 3 H16 V16 H0 Z" fill="#f9a825"/><path d="M0 1 H6.5 L7.5 3 H0 Z" fill="#e8691b"/><rect x="1.5" y="3" width="5" height="1.2" fill="#fff" opacity=".8"/></svg></div><div class="abs dtxt" style="left:36px;top:430px">Sources</div>
  <div class="btn" style="left:16px;top:481px;width:30px;height:30px"></div>
  <div class="btn" style="left:46px;top:481px;width:30px;height:30px"></div>
  <svg class="abs" style="left:25px;top:490px" width="12" height="12"><polyline points="0.80,6.70 2.05,5.30 3.30,6.70 4.55,5.30 5.80,6.70 7.05,5.30 8.30,6.70 9.55,5.30 10.80,6.70" fill="none" stroke="#666" stroke-width="0.9"/><polyline points="6.70,1.00 5.30,2.25 6.70,3.50 5.30,4.75 6.70,6.00 5.30,7.25 6.70,8.50 5.30,9.75 6.70,11.00" fill="none" stroke="#666" stroke-width="0.9"/></svg>
  <svg class="abs" style="left:55px;top:490px" width="12" height="12"><polyline points="0.80,6.70 2.05,5.30 3.30,6.70 4.55,5.30 5.80,6.70 7.05,5.30 8.30,6.70 9.55,5.30 10.80,6.70" fill="none" stroke="#666" stroke-width="0.9"/></svg>
  <!-- pane handle -->
  <svg class="abs" style="left:161px;top:284px" width="4" height="36"><rect x="0" y="0" width="2" height="2" fill="#fff"/><rect x="1" y="1" width="2" height="2" fill="#111"/><rect x="0" y="5" width="2" height="2" fill="#fff"/><rect x="1" y="6" width="2" height="2" fill="#111"/><rect x="0" y="10" width="2" height="2" fill="#fff"/><rect x="1" y="11" width="2" height="2" fill="#111"/><rect x="0" y="15" width="2" height="2" fill="#fff"/><rect x="1" y="16" width="2" height="2" fill="#111"/><rect x="0" y="20" width="2" height="2" fill="#fff"/><rect x="1" y="21" width="2" height="2" fill="#111"/><rect x="0" y="25" width="2" height="2" fill="#fff"/><rect x="1" y="26" width="2" height="2" fill="#111"/><rect x="0" y="30" width="2" height="2" fill="#fff"/><rect x="1" y="31" width="2" height="2" fill="#111"/></svg>

  <!-- file list -->
  <div class="abs" style="left:165px;top:83px;width:543px;height:432px;background:#fff;border-left:1px solid #a2a5aa"></div>
  <div class="abs" style="left:165px;top:83px;width:543px;height:24px;background:#f3f4f6;border-top:1px solid #a2a5aa;border-left:1px solid #a2a5aa"></div>
  <div class="abs" style="left:562px;top:84px;width:1px;height:23px;background:#202020"></div>
  <div class="abs" style="left:628px;top:84px;width:1px;height:23px;background:#202020"></div>
  <div class="abs" style="left:706px;top:84px;width:1px;height:23px;background:#202020"></div>
  <div class="abs dtxt" style="left:173px;top:88px;font-weight:bold;font-size:12.6px">Name</div>
  <svg class="abs" style="left:543px;top:92px" width="9" height="6"><path d="M0 0 H9 L4.5 5.5 Z" fill="#5b5e66"/></svg>
  <div class="abs dtxt" style="left:570px;top:88px;font-weight:bold;font-size:12.6px">Size</div>
  <div class="abs dtxt" style="left:636px;top:88px;font-weight:bold;font-size:12.6px">Modified</div>
  <div class="abs" style="left:166px;top:107px;width:541px;height:24px;background:#4a90d9;outline:1px dotted #fff;outline-offset:-1px"></div><div class="abs" style="left:171px;top:111px"><svg width="12" height="16" viewBox="0 0 12 16"><path d="M0 0 H9 L12 3.5 V16 H0 Z" fill="#2d6294"/><path d="M8.5 0 L12 3.5 H8.5 Z" fill="#93b2cd"/><rect x="4" y="4" width="4.6" height="4.2" rx="1.6" fill="#fff"/><rect x="2" y="6.6" width="8" height="4" rx="1.3" fill="#fff"/><rect x="3.8" y="9" width="4.6" height="4.3" rx="1.6" fill="#fff"/><rect x="4" y="8.1" width="3.8" height="0.8" fill="#5a86b0"/><rect x="4.8" y="4.8" width="1" height="1" fill="#2d6294"/><rect x="6.6" y="11.4" width="1" height="1" fill="#2d6294"/></svg></div><div class="abs dtxt" style="left:189px;top:111px;color:#ffffff">compress_net.py</div><div class="abs dtxt" style="left:568px;top:111px;color:#ffffff">3.9 kB</div><div class="abs dtxt" style="left:634px;top:111px;color:#ffffff">Wednesday</div><div class="abs" style="left:166px;top:131px;width:397px;height:24px;background:#e7e7e7"></div><div class="abs" style="left:563px;top:131px;width:144px;height:24px;background:#faf9f9"></div><div class="abs" style="left:171px;top:135px"><svg width="12" height="16" viewBox="0 0 12 16"><path d="M0 0 H9 L12 3.5 V16 H0 Z" fill="#2d6294"/><path d="M8.5 0 L12 3.5 H8.5 Z" fill="#93b2cd"/><rect x="4" y="4" width="4.6" height="4.2" rx="1.6" fill="#fff"/><rect x="2" y="6.6" width="8" height="4" rx="1.3" fill="#fff"/><rect x="3.8" y="9" width="4.6" height="4.3" rx="1.6" fill="#fff"/><rect x="4" y="8.1" width="3.8" height="0.8" fill="#5a86b0"/><rect x="4.8" y="4.8" width="1" height="1" fill="#2d6294"/><rect x="6.6" y="11.4" width="1" height="1" fill="#2d6294"/></svg></div><div class="abs dtxt" style="left:189px;top:135px;color:#4d5058">demo.py</div><div class="abs dtxt" style="left:568px;top:135px;color:#4d5058">5.0 kB</div><div class="abs dtxt" style="left:634px;top:135px;color:#4d5058">Wednesday</div><div class="abs" style="left:166px;top:155px;width:397px;height:24px;background:#eeeeee"></div><div class="abs" style="left:563px;top:155px;width:144px;height:24px;background:#ffffff"></div><div class="abs" style="left:171px;top:159px"><svg width="12" height="16" viewBox="0 0 12 16"><path d="M0 0 H9 L12 3.5 V16 H0 Z" fill="#2d6294"/><path d="M8.5 0 L12 3.5 H8.5 Z" fill="#93b2cd"/><rect x="4" y="4" width="4.6" height="4.2" rx="1.6" fill="#fff"/><rect x="2" y="6.6" width="8" height="4" rx="1.3" fill="#fff"/><rect x="3.8" y="9" width="4.6" height="4.3" rx="1.6" fill="#fff"/><rect x="4" y="8.1" width="3.8" height="0.8" fill="#5a86b0"/><rect x="4.8" y="4.8" width="1" height="1" fill="#2d6294"/><rect x="6.6" y="11.4" width="1" height="1" fill="#2d6294"/></svg></div><div class="abs dtxt" style="left:189px;top:159px;color:#4d5058">eval_recall.py</div><div class="abs dtxt" style="left:568px;top:159px;color:#4d5058">2.3 kB</div><div class="abs dtxt" style="left:634px;top:159px;color:#4d5058">Wednesday</div><div class="abs" style="left:166px;top:179px;width:397px;height:24px;background:#e7e7e7"></div><div class="abs" style="left:563px;top:179px;width:144px;height:24px;background:#faf9f9"></div><div class="abs" style="left:171px;top:183px"><svg width="12" height="16" viewBox="0 0 12 16"><path d="M0 0 H9 L12 3.5 V16 H0 Z" fill="#2d6294"/><path d="M8.5 0 L12 3.5 H8.5 Z" fill="#93b2cd"/><rect x="4" y="4" width="4.6" height="4.2" rx="1.6" fill="#fff"/><rect x="2" y="6.6" width="8" height="4" rx="1.3" fill="#fff"/><rect x="3.8" y="9" width="4.6" height="4.3" rx="1.6" fill="#fff"/><rect x="4" y="8.1" width="3.8" height="0.8" fill="#5a86b0"/><rect x="4.8" y="4.8" width="1" height="1" fill="#2d6294"/><rect x="6.6" y="11.4" width="1" height="1" fill="#2d6294"/></svg></div><div class="abs dtxt" style="left:189px;top:183px;color:#4d5058">_init_paths.py</div><div class="abs dtxt" style="left:568px;top:183px;color:#4d5058">637 bytes</div><div class="abs dtxt" style="left:634px;top:183px;color:#4d5058">Wednesday</div><div class="abs" style="left:166px;top:203px;width:397px;height:24px;background:#eeeeee"></div><div class="abs" style="left:563px;top:203px;width:144px;height:24px;background:#ffffff"></div><div class="abs" style="left:171px;top:207px"><svg width="12" height="16" viewBox="0 0 12 16"><path d="M0 0 H8 L12 4 V16 H0 Z" fill="#e2e2e2"/><path d="M8 0 V4 H12 Z" fill="#f4f4f4"/><path d="M2 6.5 H10 M2 8.5 H10 M2 10.5 H10 M2 12.5 H10 M2 14.5 H10" stroke="#7a7a7a" stroke-width="1"/></svg></div><div class="abs dtxt" style="left:189px;top:207px;color:#4d5058">README.md</div><div class="abs dtxt" style="left:568px;top:207px;color:#4d5058">66 bytes</div><div class="abs dtxt" style="left:634px;top:207px;color:#4d5058">Wednesday</div><div class="abs" style="left:166px;top:227px;width:397px;height:24px;background:#e7e7e7"></div><div class="abs" style="left:563px;top:227px;width:144px;height:24px;background:#faf9f9"></div><div class="abs" style="left:171px;top:231px"><svg width="12" height="16" viewBox="0 0 12 16"><path d="M0 0 H9 L12 3.5 V16 H0 Z" fill="#2d6294"/><path d="M8.5 0 L12 3.5 H8.5 Z" fill="#93b2cd"/><rect x="4" y="4" width="4.6" height="4.2" rx="1.6" fill="#fff"/><rect x="2" y="6.6" width="8" height="4" rx="1.3" fill="#fff"/><rect x="3.8" y="9" width="4.6" height="4.3" rx="1.6" fill="#fff"/><rect x="4" y="8.1" width="3.8" height="0.8" fill="#5a86b0"/><rect x="4.8" y="4.8" width="1" height="1" fill="#2d6294"/><rect x="6.6" y="11.4" width="1" height="1" fill="#2d6294"/></svg></div><div class="abs dtxt" style="left:189px;top:231px;color:#4d5058">reval.py</div><div class="abs dtxt" style="left:568px;top:231px;color:#4d5058">2.1 kB</div><div class="abs dtxt" style="left:634px;top:231px;color:#4d5058">Wednesday</div><div class="abs" style="left:166px;top:251px;width:397px;height:24px;background:#eeeeee"></div><div class="abs" style="left:563px;top:251px;width:144px;height:24px;background:#ffffff"></div><div class="abs" style="left:171px;top:255px"><svg width="12" height="16" viewBox="0 0 12 16"><path d="M0 0 H9 L12 3.5 V16 H0 Z" fill="#2d6294"/><path d="M8.5 0 L12 3.5 H8.5 Z" fill="#93b2cd"/><rect x="4" y="4" width="4.6" height="4.2" rx="1.6" fill="#fff"/><rect x="2" y="6.6" width="8" height="4" rx="1.3" fill="#fff"/><rect x="3.8" y="9" width="4.6" height="4.3" rx="1.6" fill="#fff"/><rect x="4" y="8.1" width="3.8" height="0.8" fill="#5a86b0"/><rect x="4.8" y="4.8" width="1" height="1" fill="#2d6294"/><rect x="6.6" y="11.4" width="1" height="1" fill="#2d6294"/></svg></div><div class="abs dtxt" style="left:189px;top:255px;color:#4d5058">rpn_generate.py</div><div class="abs dtxt" style="left:568px;top:255px;color:#4d5058">3.0 kB</div><div class="abs dtxt" style="left:634px;top:255px;color:#4d5058">Wednesday</div><div class="abs" style="left:166px;top:275px;width:397px;height:24px;background:#e7e7e7"></div><div class="abs" style="left:563px;top:275px;width:144px;height:24px;background:#faf9f9"></div><div class="abs" style="left:171px;top:279px"><svg width="12" height="16" viewBox="0 0 12 16"><path d="M0 0 H9 L12 3.5 V16 H0 Z" fill="#2d6294"/><path d="M8.5 0 L12 3.5 H8.5 Z" fill="#93b2cd"/><rect x="4" y="4" width="4.6" height="4.2" rx="1.6" fill="#fff"/><rect x="2" y="6.6" width="8" height="4" rx="1.3" fill="#fff"/><rect x="3.8" y="9" width="4.6" height="4.3" rx="1.6" fill="#fff"/><rect x="4" y="8.1" width="3.8" height="0.8" fill="#5a86b0"/><rect x="4.8" y="4.8" width="1" height="1" fill="#2d6294"/><rect x="6.6" y="11.4" width="1" height="1" fill="#2d6294"/></svg></div><div class="abs dtxt" style="left:189px;top:279px;color:#4d5058">test_net.py</div><div class="abs dtxt" style="left:568px;top:279px;color:#4d5058">3.2 kB</div><div class="abs dtxt" style="left:634px;top:279px;color:#4d5058">Wednesday</div><div class="abs" style="left:166px;top:299px;width:397px;height:24px;background:#eeeeee"></div><div class="abs" style="left:563px;top:299px;width:144px;height:24px;background:#ffffff"></div><div class="abs" style="left:171px;top:303px"><svg width="12" height="16" viewBox="0 0 12 16"><path d="M0 0 H9 L12 3.5 V16 H0 Z" fill="#2d6294"/><path d="M8.5 0 L12 3.5 H8.5 Z" fill="#93b2cd"/><rect x="4" y="4" width="4.6" height="4.2" rx="1.6" fill="#fff"/><rect x="2" y="6.6" width="8" height="4" rx="1.3" fill="#fff"/><rect x="3.8" y="9" width="4.6" height="4.3" rx="1.6" fill="#fff"/><rect x="4" y="8.1" width="3.8" height="0.8" fill="#5a86b0"/><rect x="4.8" y="4.8" width="1" height="1" fill="#2d6294"/><rect x="6.6" y="11.4" width="1" height="1" fill="#2d6294"/></svg></div><div class="abs dtxt" style="left:189px;top:303px;color:#4d5058">train_faster_rcnn_alt_opt.py</div><div class="abs dtxt" style="left:568px;top:303px;color:#4d5058">12.9 kB</div><div class="abs dtxt" style="left:634px;top:303px;color:#4d5058">Wednesday</div><div class="abs" style="left:166px;top:323px;width:397px;height:24px;background:#e7e7e7"></div><div class="abs" style="left:563px;top:323px;width:144px;height:24px;background:#faf9f9"></div><div class="abs" style="left:171px;top:327px"><svg width="12" height="16" viewBox="0 0 12 16"><path d="M0 0 H9 L12 3.5 V16 H0 Z" fill="#2d6294"/><path d="M8.5 0 L12 3.5 H8.5 Z" fill="#93b2cd"/><rect x="4" y="4" width="4.6" height="4.2" rx="1.6" fill="#fff"/><rect x="2" y="6.6" width="8" height="4" rx="1.3" fill="#fff"/><rect x="3.8" y="9" width="4.6" height="4.3" rx="1.6" fill="#fff"/><rect x="4" y="8.1" width="3.8" height="0.8" fill="#5a86b0"/><rect x="4.8" y="4.8" width="1" height="1" fill="#2d6294"/><rect x="6.6" y="11.4" width="1" height="1" fill="#2d6294"/></svg></div><div class="abs dtxt" style="left:189px;top:327px;color:#4d5058">train_net.py</div><div class="abs dtxt" style="left:568px;top:327px;color:#4d5058">3.7 kB</div><div class="abs dtxt" style="left:634px;top:327px;color:#4d5058">Wednesday</div><div class="abs" style="left:166px;top:347px;width:397px;height:24px;background:#eeeeee"></div><div class="abs" style="left:563px;top:347px;width:144px;height:24px;background:#ffffff"></div><div class="abs" style="left:171px;top:351px"><svg width="12" height="16" viewBox="0 0 12 16"><path d="M0 0 H9 L12 3.5 V16 H0 Z" fill="#2d6294"/><path d="M8.5 0 L12 3.5 H8.5 Z" fill="#93b2cd"/><rect x="4" y="4" width="4.6" height="4.2" rx="1.6" fill="#fff"/><rect x="2" y="6.6" width="8" height="4" rx="1.3" fill="#fff"/><rect x="3.8" y="9" width="4.6" height="4.3" rx="1.6" fill="#fff"/><rect x="4" y="8.1" width="3.8" height="0.8" fill="#5a86b0"/><rect x="4.8" y="4.8" width="1" height="1" fill="#2d6294"/><rect x="6.6" y="11.4" width="1" height="1" fill="#2d6294"/></svg></div><div class="abs dtxt" style="left:189px;top:351px;color:#4d5058">train_svms.py</div><div class="abs dtxt" style="left:568px;top:351px;color:#4d5058">13.5 kB</div><div class="abs dtxt" style="left:634px;top:351px;color:#4d5058">Wednesday</div>

  <div class="btn" style="left:532px;top:527px;width:85px;height:28px"></div>
  <div class="abs dtxt" style="left:532px;top:533px;width:85px;text-align:center">Cancel</div>
  <div class="btn" style="left:623px;top:527px;width:85px;height:28px"></div>
  <div class="abs dtxt" style="left:623px;top:533px;width:85px;text-align:center">Open</div>
</div>
</body></html>
